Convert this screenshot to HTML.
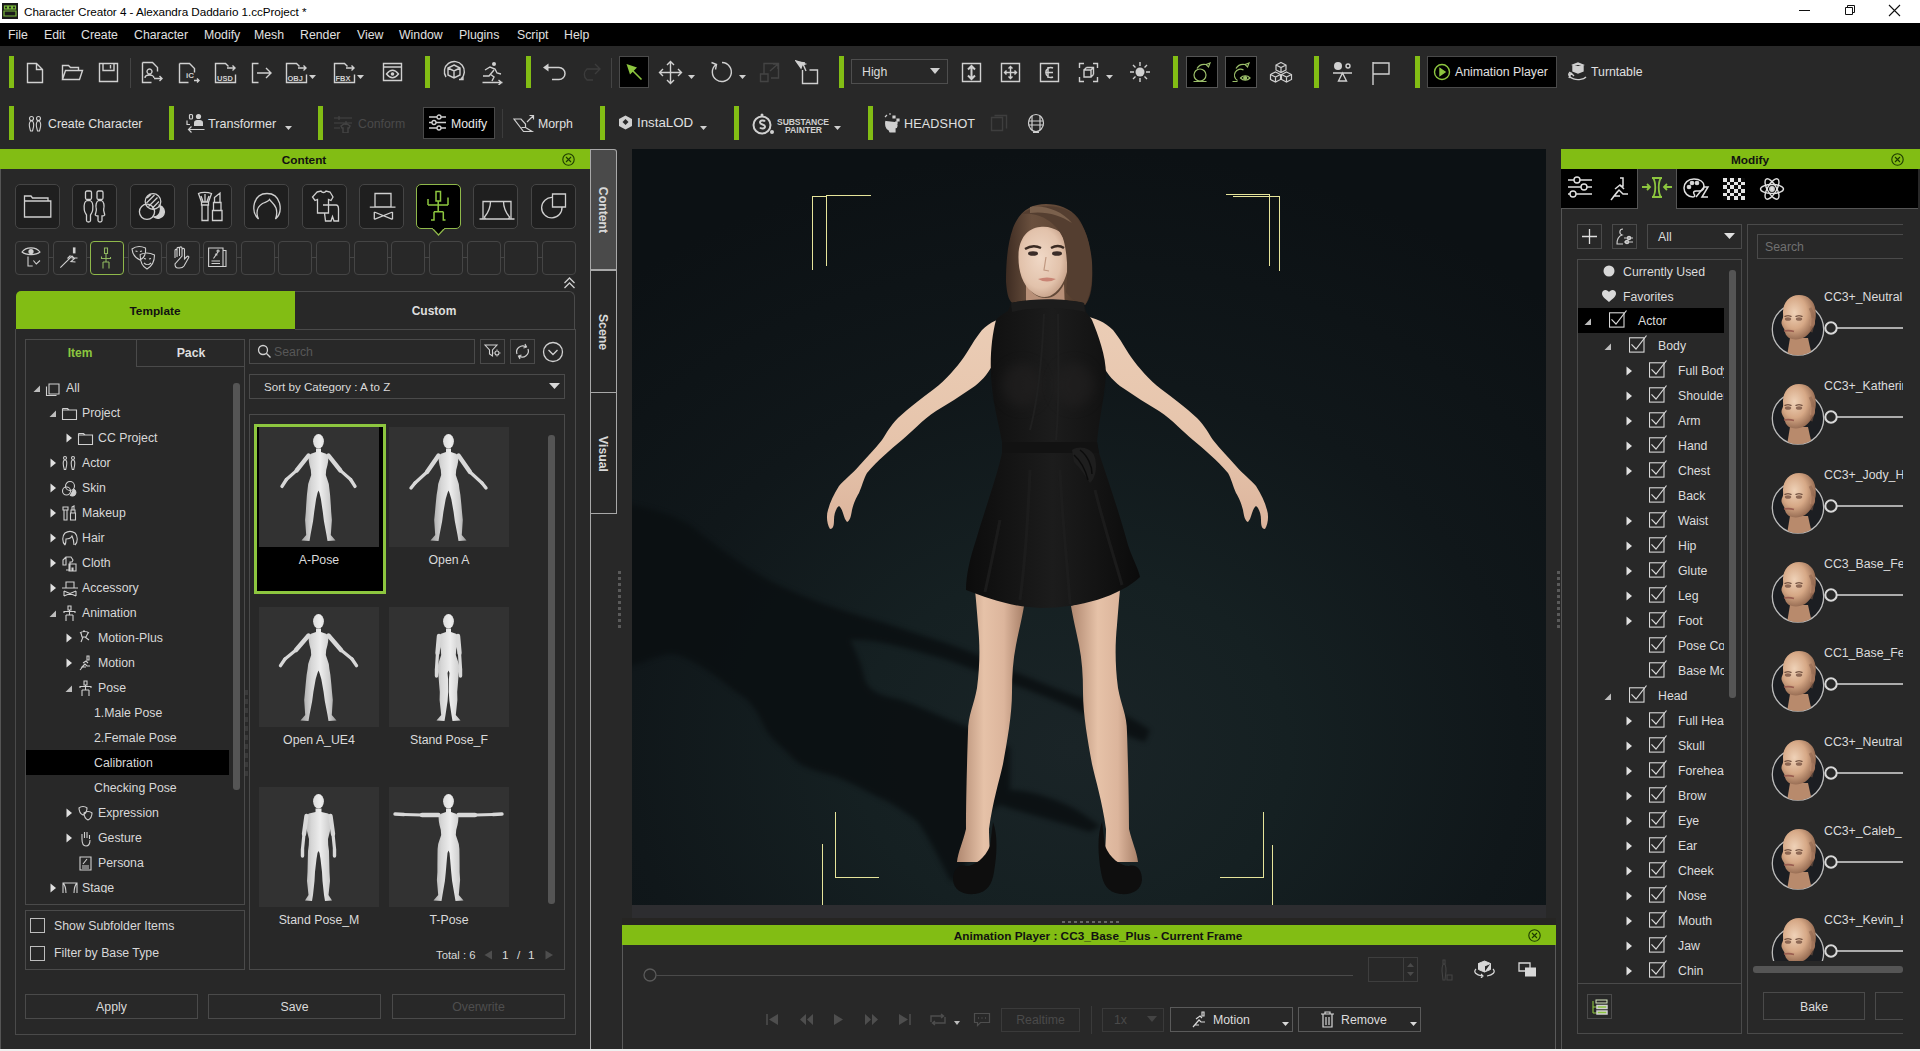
<!DOCTYPE html><html><head><meta charset="utf-8"><style>
*{margin:0;padding:0;box-sizing:border-box}
html,body{width:1920px;height:1051px;overflow:hidden}
body{background:#282828;font-family:"Liberation Sans",sans-serif;font-size:12px;color:#d4d4d4;position:relative}
.a{position:absolute}
.t{position:absolute;white-space:nowrap}
</style></head><body>

<div class="a" style="left:0px;top:0px;width:1920px;height:23px;background:#fff"></div>
<svg class="a" style="left:2px;top:3px;" width="16" height="16" viewBox="0 0 16 16" fill="none" stroke="#d0d0d0" stroke-width="1.5"><rect x="0" y="0" width="16" height="16" fill="#1a1a1a" stroke="none"/><g stroke="#7ab93a" stroke-width="1.2"><rect x="2.5" y="3" width="3" height="3"/><rect x="6.5" y="3" width="3" height="3"/><rect x="10.5" y="3" width="3" height="3"/><path d="M2 8h12v5H2z"/></g></svg>
<div class="t" style="left:24px;top:4.5px;font-size:11.7px;line-height:14px;color:#000;letter-spacing:-0.05px">Character Creator 4 - Alexandra Daddario 1.ccProject *</div>
<div class="a" style="left:1799px;top:10px;width:11px;height:1px;background:#111"></div>
<svg class="a" style="left:1843px;top:4px;" width="12" height="12" viewBox="0 0 12 12" fill="none" stroke="#d0d0d0" stroke-width="1.5"><path d="M2.5 3.5h7v7h-7z M4.5 3.5v-2h7v7h-2" stroke="#111" stroke-width="1"/></svg>
<svg class="a" style="left:1888px;top:4px;" width="13" height="13" viewBox="0 0 13 13" fill="none" stroke="#d0d0d0" stroke-width="1.5"><path d="M1 1L12 12M12 1L1 12" stroke="#111" stroke-width="1.1"/></svg>
<div class="a" style="left:0px;top:23px;width:1920px;height:23px;background:#000"></div>
<div class="t" style="left:8px;top:27.5px;font-size:12.3px;line-height:14px;color:#e0e0e0">File</div>
<div class="t" style="left:44px;top:27.5px;font-size:12.3px;line-height:14px;color:#e0e0e0">Edit</div>
<div class="t" style="left:81px;top:27.5px;font-size:12.3px;line-height:14px;color:#e0e0e0">Create</div>
<div class="t" style="left:134px;top:27.5px;font-size:12.3px;line-height:14px;color:#e0e0e0">Character</div>
<div class="t" style="left:204px;top:27.5px;font-size:12.3px;line-height:14px;color:#e0e0e0">Modify</div>
<div class="t" style="left:254px;top:27.5px;font-size:12.3px;line-height:14px;color:#e0e0e0">Mesh</div>
<div class="t" style="left:300px;top:27.5px;font-size:12.3px;line-height:14px;color:#e0e0e0">Render</div>
<div class="t" style="left:357px;top:27.5px;font-size:12.3px;line-height:14px;color:#e0e0e0">View</div>
<div class="t" style="left:399px;top:27.5px;font-size:12.3px;line-height:14px;color:#e0e0e0">Window</div>
<div class="t" style="left:459px;top:27.5px;font-size:12.3px;line-height:14px;color:#e0e0e0">Plugins</div>
<div class="t" style="left:517px;top:27.5px;font-size:12.3px;line-height:14px;color:#e0e0e0">Script</div>
<div class="t" style="left:564px;top:27.5px;font-size:12.3px;line-height:14px;color:#e0e0e0">Help</div>
<div class="a" style="left:0px;top:46px;width:1920px;height:103px;background:#282828"></div>
<div class="a" style="left:9px;top:56px;width:5px;height:32px;background:#82bd14"></div>
<svg class="a" style="left:26px;top:62px;stroke:#d0d0d0;stroke-width:1.4px" width="18" height="22" viewBox="0 0 18 22" fill="none" stroke="#d0d0d0" stroke-width="1.5"><path d="M1.5 1.5h9l6 6v13h-15z M10.5 1.5v6h6"/></svg>
<svg class="a" style="left:61px;top:64px;stroke:#d0d0d0;stroke-width:1.4px" width="23" height="17" viewBox="0 0 23 17" fill="none" stroke="#d0d0d0" stroke-width="1.5"><path d="M1.5 15.5v-14h6l2 2h8v3 M1.5 15.5l3-9h17l-3 9z"/></svg>
<svg class="a" style="left:98px;top:62px;stroke:#d0d0d0;stroke-width:1.4px" width="21" height="21" viewBox="0 0 21 21" fill="none" stroke="#d0d0d0" stroke-width="1.5"><path d="M1.5 1.5h18v18h-18z M5 1.5v7h11v-7 M12.5 3v3.5"/></svg>
<div class="a" style="left:130px;top:58px;width:1px;height:30px;background:#444"></div>
<svg class="a" style="left:141px;top:61px;stroke:#d0d0d0;stroke-width:1.4px" width="23" height="23" viewBox="0 0 23 23" fill="none" stroke="#d0d0d0" stroke-width="1.5"><path d="M1.5 1.5h10l5 5v4 M1.5 1.5v20h9 M8.5 8a2.5 2.5 0 1 0 0.01 0 M4 17c0-4 9-4 9 0 M13 17.5h8 M18.5 15l2.5 2.5-2.5 2.5"/></svg>
<svg class="a" style="left:178px;top:62px;stroke:#d0d0d0;stroke-width:1.4px" width="23" height="22" viewBox="0 0 23 22" fill="none" stroke="#d0d0d0" stroke-width="1.5"><path d="M1.5 1.5h10l5 5v4 M1.5 1.5v19h9"/><text x="8" y="16" font-size="8" font-weight="bold" fill="#d0d0d0" stroke="none" font-family="Liberation Sans">iC</text><path d="M16 18.5h5 M19 16.5l2 2-2 2"/></svg>
<svg class="a" style="left:214px;top:62px;stroke:#d0d0d0;stroke-width:1.4px" width="24" height="22" viewBox="0 0 24 22" fill="none" stroke="#d0d0d0" stroke-width="1.5"><path d="M1.5 8v12.5h20v-8 M1.5 8v-6.5h10l3 3"/><text x="3" y="19" font-size="7.5" font-weight="bold" fill="#d0d0d0" stroke="none" font-family="Liberation Sans">USD</text><path d="M13 6h8 M18.5 3.5l2.5 2.5-2.5 2.5"/></svg>
<svg class="a" style="left:251px;top:62px;stroke:#d0d0d0;stroke-width:1.4px" width="22" height="22" viewBox="0 0 22 22" fill="none" stroke="#d0d0d0" stroke-width="1.5"><path d="M7.5 1.5h-6v19h6 M6 11h14 M15 6l5 5-5 5"/></svg>
<svg class="a" style="left:285px;top:62px;stroke:#d0d0d0;stroke-width:1.4px" width="24" height="22" viewBox="0 0 24 22" fill="none" stroke="#d0d0d0" stroke-width="1.5"><path d="M1.5 8v12.5h20v-8 M1.5 8v-6.5h10l3 3"/><text x="2.5" y="19" font-size="7.5" font-weight="bold" fill="#d0d0d0" stroke="none" font-family="Liberation Sans">OBJ</text><path d="M13 6h8 M18.5 3.5l2.5 2.5-2.5 2.5"/></svg>
<svg class="a" style="left:309px;top:75px;stroke:#d0d0d0;stroke-width:1.4px" width="8" height="5" viewBox="0 0 8 5" fill="none" stroke="#d0d0d0" stroke-width="1.5"><path d="M0 0h7l-3.5 4z" fill="#d0d0d0" stroke="none"/></svg>
<svg class="a" style="left:333px;top:62px;stroke:#d0d0d0;stroke-width:1.4px" width="24" height="22" viewBox="0 0 24 22" fill="none" stroke="#d0d0d0" stroke-width="1.5"><path d="M1.5 8v12.5h20v-8 M1.5 8v-6.5h10l3 3"/><text x="2.5" y="19" font-size="7.5" font-weight="bold" fill="#d0d0d0" stroke="none" font-family="Liberation Sans">FBX</text><path d="M13 6h8 M18.5 3.5l2.5 2.5-2.5 2.5"/></svg>
<svg class="a" style="left:357px;top:75px;stroke:#d0d0d0;stroke-width:1.4px" width="8" height="5" viewBox="0 0 8 5" fill="none" stroke="#d0d0d0" stroke-width="1.5"><path d="M0 0h7l-3.5 4z" fill="#d0d0d0" stroke="none"/></svg>
<svg class="a" style="left:382px;top:62px;stroke:#d0d0d0;stroke-width:1.4px" width="21" height="20" viewBox="0 0 21 20" fill="none" stroke="#d0d0d0" stroke-width="1.5"><path d="M1.5 1.5h18v17h-18z M1.5 5h18 M4.5 12c4-5 8-5 12 0c-4 5-8 5-12 0z"/><circle cx="10.5" cy="12" r="1.8" fill="#d0d0d0" stroke="none"/></svg>
<div class="a" style="left:425px;top:56px;width:5px;height:32px;background:#82bd14"></div>
<svg class="a" style="left:442px;top:60px;stroke:#d0d0d0;stroke-width:1.4px" width="24" height="24" viewBox="0 0 24 24" fill="none" stroke="#d0d0d0" stroke-width="1.5"><path d="M12 5l6 3v7l-6 3-6-3v-7z M6 8l6 3 6-3 M12 11v7" /><path d="M4 17a10 10 0 1 1 15 2 M17 19.5h4v-3"/></svg>
<svg class="a" style="left:481px;top:61px;stroke:#d0d0d0;stroke-width:1.4px" width="23" height="24" viewBox="0 0 23 24" fill="none" stroke="#d0d0d0" stroke-width="1.5"><circle cx="13" cy="3" r="2" fill="#d0d0d0" stroke="none"/><path d="M4 9l5-3 5 2 2 4 4 1 M9 13l4 3-2 4 M13 9l-5 6h-6 M1.5 21.5h20 M17.5 19l3 2.5-3 2.5"/></svg>
<div class="a" style="left:526px;top:56px;width:5px;height:32px;background:#82bd14"></div>
<svg class="a" style="left:542px;top:62px;stroke:#d0d0d0;stroke-width:1.4px" width="26" height="20" viewBox="0 0 26 20" fill="none" stroke="#d0d0d0" stroke-width="1.5"><path d="M3 5.5H17A6 6 0 0 1 17 17.5H10" stroke-width="1.5"/><path d="M1 5.5L6.5 1.5V9.5Z" fill="#d0d0d0" stroke="none"/></svg>
<svg class="a" style="left:578px;top:62px;stroke:#3c3c3c;stroke-width:1.4px" width="24" height="19" viewBox="0 0 24 19" fill="none" stroke="#d0d0d0" stroke-width="1.5"><path d="M22 7h-13a7 7 0 0 0 0 11h6 M17 2l5 5-5 5"/></svg>
<div class="a" style="left:611px;top:58px;width:1px;height:30px;background:#444"></div>
<div class="a" style="left:619px;top:56px;width:30px;height:32px;background:#000;border:1px solid #4a4a4a"></div>
<svg class="a" style="left:624px;top:61px;stroke:#8dc63f;stroke-width:1.4px" width="20" height="20" viewBox="0 0 20 20" fill="none" stroke="#d0d0d0" stroke-width="1.5"><path d="M2.5 3L13 6.5L6 13.5Z" fill="#8dc63f" stroke="none"/><path d="M8 9L17.5 18.5" stroke-width="1.6"/></svg>
<svg class="a" style="left:658px;top:60px;stroke:#d0d0d0;stroke-width:1.4px" width="25" height="25" viewBox="0 0 25 25" fill="none" stroke="#d0d0d0" stroke-width="1.5"><path d="M12.5 1.5v22 M1.5 12.5h22 M9 5l3.5-3.5L16 5 M9 20l3.5 3.5L16 20 M5 9l-3.5 3.5L5 16 M20 9l3.5 3.5L20 16"/></svg>
<svg class="a" style="left:688px;top:75px;stroke:#d0d0d0;stroke-width:1.4px" width="8" height="5" viewBox="0 0 8 5" fill="none" stroke="#d0d0d0" stroke-width="1.5"><path d="M0 0h7l-3.5 4z" fill="#d0d0d0" stroke="none"/></svg>
<svg class="a" style="left:709px;top:60px;stroke:#d0d0d0;stroke-width:1.4px" width="25" height="25" viewBox="0 0 25 25" fill="none" stroke="#d0d0d0" stroke-width="1.5"><path d="M7 4.5a9.5 9.5 0 1 0 6-2 M2.5 2.5l5 2-1 5"/></svg>
<svg class="a" style="left:739px;top:75px;stroke:#d0d0d0;stroke-width:1.4px" width="8" height="5" viewBox="0 0 8 5" fill="none" stroke="#d0d0d0" stroke-width="1.5"><path d="M0 0h7l-3.5 4z" fill="#d0d0d0" stroke="none"/></svg>
<svg class="a" style="left:759px;top:62px;stroke:#444;stroke-width:1.4px" width="21" height="21" viewBox="0 0 21 21" fill="none" stroke="#d0d0d0" stroke-width="1.5"><path d="M1.5 12v7.5h7.5v-7.5z M5 12v-10.5h14.5v14.5h-7.5 M11 9l8-7 M14 2h5v5"/></svg>
<svg class="a" style="left:795px;top:60px;stroke:#d0d0d0;stroke-width:1.4px" width="24" height="25" viewBox="0 0 24 25" fill="none" stroke="#d0d0d0" stroke-width="1.5"><path d="M7.5 10v13.5h15v-13.5h-8 M2 2l6 2 3 7 M2 2l8 1"/><path d="M1 1l9 3-3 1-1 3z" fill="#d0d0d0"/></svg>
<div class="a" style="left:839px;top:56px;width:5px;height:32px;background:#82bd14"></div>
<div class="a" style="left:851px;top:59px;width:97px;height:25px;border:1px solid #4e4e4e;background:#282828"></div>
<div class="t" style="left:862px;top:64.5px;font-size:12.3px;line-height:14px;color:#dcdcdc">High</div>
<svg class="a" style="left:930px;top:68px;stroke:#d0d0d0;stroke-width:1.4px" width="11" height="7" viewBox="0 0 11 7" fill="none" stroke="#d0d0d0" stroke-width="1.5"><path d="M0 0h10l-5 6z" fill="#d0d0d0" stroke="none"/></svg>
<svg class="a" style="left:961px;top:62px;stroke:#d0d0d0;stroke-width:1.4px" width="21" height="21" viewBox="0 0 21 21" fill="none" stroke="#d0d0d0" stroke-width="1.5"><path d="M1.5 1.5h18v18h-18z"/><path d="M10.5 4v13 M7 7.5l3.5-3.5 3.5 3.5 M7 13.5l3.5 3.5 3.5-3.5" stroke-width="2"/></svg>
<svg class="a" style="left:1000px;top:62px;stroke:#d0d0d0;stroke-width:1.4px" width="21" height="21" viewBox="0 0 21 21" fill="none" stroke="#d0d0d0" stroke-width="1.5"><path d="M1.5 1.5h18v18h-18z M10.5 4.5v12 M4.5 10.5h12 M8.5 6.5l2-2 2 2 M8.5 14.5l2 2 2-2 M6.5 8.5l-2 2 2 2 M14.5 8.5l2 2-2 2"/></svg>
<svg class="a" style="left:1039px;top:62px;stroke:#d0d0d0;stroke-width:1.4px" width="21" height="21" viewBox="0 0 21 21" fill="none" stroke="#d0d0d0" stroke-width="1.5"><path d="M1.5 1.5h18v18h-18z M14 6a5 5 0 1 0 0 9 M7 10.5h7 M9 5v11"/></svg>
<svg class="a" style="left:1078px;top:62px;stroke:#d0d0d0;stroke-width:1.4px" width="21" height="21" viewBox="0 0 21 21" fill="none" stroke="#d0d0d0" stroke-width="1.5"><path d="M1.5 6v-4.5h4.5 M15 1.5h4.5v4.5 M19.5 15v4.5h-4.5 M6 19.5h-4.5v-4.5 M6 8h7v7h-7z M8.5 5.5h7v7 M6 8l2.5-2.5 M13 8l2.5-2.5 M13 15l2.5-2.5"/></svg>
<svg class="a" style="left:1106px;top:75px;stroke:#d0d0d0;stroke-width:1.4px" width="8" height="5" viewBox="0 0 8 5" fill="none" stroke="#d0d0d0" stroke-width="1.5"><path d="M0 0h7l-3.5 4z" fill="#d0d0d0" stroke="none"/></svg>
<svg class="a" style="left:1129px;top:61px;stroke:#d0d0d0;stroke-width:1.4px" width="22" height="22" viewBox="0 0 22 22" fill="none" stroke="#d0d0d0" stroke-width="1.5"><circle cx="11" cy="11" r="4.5" fill="#d0d0d0" stroke="none"/><path d="M11 1v4 M11 17v4 M1 11h4 M17 11h4 M4 4l2.5 2.5 M15.5 15.5L18 18 M4 18l2.5-2.5 M15.5 6.5L18 4"/></svg>
<div class="a" style="left:1173px;top:56px;width:5px;height:32px;background:#82bd14"></div>
<div class="a" style="left:1186px;top:56px;width:32px;height:32px;background:#000;border:1px solid #555"></div>
<svg class="a" style="left:1190px;top:60px;stroke:#9cbf6a;stroke-width:1.2px" width="24" height="24" viewBox="0 0 24 24" fill="none" stroke="#d0d0d0" stroke-width="1.5"><circle cx="10" cy="15" r="6"/><path d="M7 8.5C9 5 13 4 16 4.5 M16 4.5l4-1.5-1.5 4z M3.5 21.5h13"/></svg>
<div class="a" style="left:1225px;top:56px;width:32px;height:32px;background:#000;border:1px solid #555"></div>
<svg class="a" style="left:1229px;top:60px;stroke:#9cbf6a;stroke-width:1.2px" width="24" height="24" viewBox="0 0 24 24" fill="none" stroke="#d0d0d0" stroke-width="1.5"><path d="M14.5 10a6 6 0 1 0-6 10.5 M7 8.5C9 5 13 4 16 4.5 M16 4.5l4-1.5-1.5 4z M3.5 21.5h5"/><path d="M11.5 18c2.5-3 7-3 9.5 0c-2.5 3-7 3-9.5 0z"/><circle cx="16.2" cy="18" r="1.5" fill="#9cbf6a"/></svg>
<svg class="a" style="left:1269px;top:61px;stroke:#d0d0d0;stroke-width:1.2px" width="24" height="23" viewBox="0 0 24 23" fill="none" stroke="#d0d0d0" stroke-width="1.5"><path d="M12 1.5l5 2.5v5l-5 2.5-5-2.5v-5z M7 4l5 2.5 5-2.5 M12 6.5v5 M6.5 11l5 2.5v5l-5 2.5-5-2.5v-5z M1.5 13.5l5 2.5 5-2.5 M6.5 16v5 M17.5 11l5 2.5v5l-5 2.5-5-2.5v-5z M12.5 13.5l5 2.5 5-2.5 M17.5 16v5"/></svg>
<div class="a" style="left:1314px;top:56px;width:5px;height:32px;background:#82bd14"></div>
<svg class="a" style="left:1332px;top:61px;stroke:#d0d0d0;stroke-width:1.4px" width="21" height="22" viewBox="0 0 21 22" fill="none" stroke="#d0d0d0" stroke-width="1.5"><circle cx="6" cy="5" r="4" fill="#d0d0d0" stroke="none"/><circle cx="16" cy="5" r="2"/><path d="M1 12h19 M10.5 12l-4 8h8z"/></svg>
<svg class="a" style="left:1371px;top:61px;stroke:#d0d0d0;stroke-width:1.4px" width="20" height="24" viewBox="0 0 20 24" fill="none" stroke="#d0d0d0" stroke-width="1.5"><path d="M2 1v23 M2 2h16v11h-16"/></svg>
<div class="a" style="left:1415px;top:56px;width:5px;height:32px;background:#82bd14"></div>
<div class="a" style="left:1427px;top:56px;width:130px;height:32px;background:#000;border:1px solid #4a4a4a"></div>
<svg class="a" style="left:1433px;top:63px;stroke:#8dc63f;stroke-width:1.4px" width="18" height="18" viewBox="0 0 18 18" fill="none" stroke="#d0d0d0" stroke-width="1.5"><circle cx="9" cy="9" r="7.5"/><path d="M7 5.5l5 3.5-5 3.5z" fill="#8dc63f"/></svg>
<div class="t" style="left:1455px;top:65.0px;font-size:12.3px;line-height:14px;color:#e0e0e0">Animation Player</div>
<svg class="a" style="left:1567px;top:62px;stroke:#d0d0d0;stroke-width:1.4px" width="22" height="20" viewBox="0 0 22 20" fill="none" stroke="#d0d0d0" stroke-width="1.5"><path d="M6 3l5-2 5 2-5 2z M6 3v6l5 2 5-2v-6 M11 5v6" fill="#d0d0d0"/><path d="M3 10a9 5 0 0 0 16 5 M2 16l2-5 3 3"/></svg>
<div class="t" style="left:1591px;top:65.0px;font-size:12.3px;line-height:14px;color:#e0e0e0">Turntable</div>
<div class="a" style="left:9px;top:106px;width:5px;height:34px;background:#82bd14"></div>
<svg class="a" style="left:28px;top:115px;stroke:#d0d0d0;stroke-width:1.1px" width="14" height="17" viewBox="0 0 14 17" fill="none" stroke="#d0d0d0" stroke-width="1.5"><path d="M3.5 1.5a1.5 1.5 0 0 1 0 4a1.5 1.5 0 0 1 0-4 M3.5 6c-2 0-2.5 3-2 6l1 4h2l1-4c.5-3 0-6-2-6 M10.5 1.5a1.5 1.5 0 0 1 0 4a1.5 1.5 0 0 1 0-4 M10.5 6c-2 0-2.5 3-2 6l1 4h2l1-4c.5-3 0-6-2-6"/></svg>
<div class="t" style="left:48px;top:116.5px;font-size:12.3px;line-height:14px;color:#e0e0e0">Create Character</div>
<div class="a" style="left:169px;top:106px;width:5px;height:34px;background:#82bd14"></div>
<svg class="a" style="left:186px;top:113px;stroke:#d0d0d0;stroke-width:1.2px" width="20" height="20" viewBox="0 0 20 20" fill="none" stroke="#d0d0d0" stroke-width="1.5"><rect x="3.5" y="1.5" width="3" height="4.5" rx="1"/><path d="M1 7.5V11.5H4"/><circle cx="12.5" cy="3.5" r="2.6" fill="#d0d0d0" stroke="none"/><path d="M8 13V9.5C8 7.5 10 7 12.5 7S17 7.5 17 9.5V13Z" fill="#d0d0d0" stroke="none"/><path d="M18.5 16.5H2.5M5.5 13.5L2.5 16.5L5.5 19.5"/></svg>
<div class="t" style="left:208px;top:116.5px;font-size:12.6px;line-height:14px;color:#e0e0e0">Transformer</div>
<svg class="a" style="left:285px;top:126px;stroke:#d0d0d0;stroke-width:1.4px" width="8" height="5" viewBox="0 0 8 5" fill="none" stroke="#d0d0d0" stroke-width="1.5"><path d="M0 0h7l-3.5 4z" fill="#d0d0d0" stroke="none"/></svg>
<div class="a" style="left:318px;top:106px;width:5px;height:34px;background:#82bd14"></div>
<svg class="a" style="left:333px;top:114px;stroke:#444;stroke-width:1.4px" width="21" height="19" viewBox="0 0 21 19" fill="none" stroke="#d0d0d0" stroke-width="1.5"><path d="M1 4h18 M1 9h18 M1 14h6 M6 2v4 M13 7v4" stroke-width="1.2"/><path d="M8 12l3-2h3l3 2-1 2h-1v5h-5v-5h-1z"/></svg>
<div class="t" style="left:358px;top:116.5px;font-size:12.3px;line-height:14px;color:#4a4a4a">Conform</div>
<div class="a" style="left:423px;top:107px;width:72px;height:32px;background:#000;border:1px solid #4a4a4a"></div>
<svg class="a" style="left:428px;top:114px;stroke:#d0d0d0;stroke-width:1.3px" width="19" height="17" viewBox="0 0 19 17" fill="none" stroke="#d0d0d0" stroke-width="1.5"><path d="M1 3h17 M1 8.5h17 M1 14h17"/><circle cx="11" cy="3" r="2" fill="#000"/><circle cx="6" cy="8.5" r="2" fill="#000"/><circle cx="11" cy="14" r="2" fill="#000"/></svg>
<div class="t" style="left:451px;top:116.5px;font-size:12.3px;line-height:14px;color:#e8e8e8">Modify</div>
<div class="a" style="left:502px;top:109px;width:1px;height:29px;background:#3c3c3c"></div>
<svg class="a" style="left:513px;top:114px;stroke:#d0d0d0;stroke-width:1.2px" width="23" height="19" viewBox="0 0 23 19" fill="none" stroke="#d0d0d0" stroke-width="1.5"><path d="M1 5H8L12.5 10V13.5L19 17.5H10.5Z M12.5 13.5H8.5 M14 8L20.5 1.5 M16.5 1.5H20.5V5.5"/></svg>
<div class="t" style="left:538px;top:116.5px;font-size:12.3px;line-height:14px;color:#e0e0e0">Morph</div>
<div class="a" style="left:600px;top:106px;width:5px;height:34px;background:#82bd14"></div>
<svg class="a" style="left:618px;top:115px;stroke:#d0d0d0;stroke-width:1.4px" width="15" height="15" viewBox="0 0 15 15" fill="none" stroke="#d0d0d0" stroke-width="1.5"><path d="M7.5 0.5l6.5 3.5v7l-6.5 3.5-6.5-3.5v-7z" fill="#d0d0d0" stroke="none"/><path d="M7.5 4l3 3-3 3-3-3z" fill="#282828" stroke="none"/></svg>
<div class="t" style="left:637px;top:116.0px;font-size:13.3px;line-height:14px;color:#e0e0e0">InstaLOD</div>
<svg class="a" style="left:700px;top:126px;stroke:#d0d0d0;stroke-width:1.4px" width="8" height="5" viewBox="0 0 8 5" fill="none" stroke="#d0d0d0" stroke-width="1.5"><path d="M0 0h7l-3.5 4z" fill="#d0d0d0" stroke="none"/></svg>
<div class="a" style="left:734px;top:106px;width:5px;height:34px;background:#82bd14"></div>
<svg class="a" style="left:752px;top:113px;stroke:#d0d0d0;stroke-width:1.4px" width="24" height="22" viewBox="0 0 24 22" fill="none" stroke="#d0d0d0" stroke-width="1.5"><circle cx="10" cy="12" r="8.5" stroke-width="2"/><path d="M13 8.5c-1-1.5-5-1.5-5 1s5 1.5 5 4-4 2.5-5 1" stroke-width="2"/><circle cx="20" cy="19" r="2" fill="#d0d0d0" stroke="none"/><circle cx="10" cy="2" r="1.5" fill="#d0d0d0" stroke="none"/></svg>
<div class="t" style="left:777px;top:116.5px;font-size:8.6px;line-height:10px;color:#d0d0d0;font-weight:bold;letter-spacing:-0.1px">SUBSTANCE</div>
<div class="t" style="left:785px;top:125.0px;font-size:8.6px;line-height:10px;color:#d0d0d0;font-weight:bold">PAINTER</div>
<svg class="a" style="left:834px;top:126px;stroke:#d0d0d0;stroke-width:1.4px" width="8" height="5" viewBox="0 0 8 5" fill="none" stroke="#d0d0d0" stroke-width="1.5"><path d="M0 0h7l-3.5 4z" fill="#d0d0d0" stroke="none"/></svg>
<div class="a" style="left:868px;top:106px;width:5px;height:34px;background:#82bd14"></div>
<svg class="a" style="left:883px;top:113px;stroke:#d0d0d0;stroke-width:1.4px" width="18" height="20" viewBox="0 0 18 20" fill="none" stroke="#d0d0d0" stroke-width="1.5"><path d="M3 8c-1 3 0 8 3 9l1 2h5v-4c2 0 2-2 2-3l-2-3 M2 4l2-2 M6 1h2 M10 3h2v2h-2z M14 6h2v2h-2z M12 9h2v2" fill="#d0d0d0" stroke-width="1.2"/></svg>
<div class="t" style="left:904px;top:117.0px;font-size:12.6px;line-height:14px;color:#e0e0e0;letter-spacing:0.15px">HEADSHOT</div>
<svg class="a" style="left:990px;top:114px;stroke:#3e3e3e;stroke-width:1.4px" width="18" height="18" viewBox="0 0 18 18" fill="none" stroke="#d0d0d0" stroke-width="1.5"><path d="M1.5 3.5h11v13h-11z M4.5 1.5h12v13" /></svg>
<svg class="a" style="left:1027px;top:113px;stroke:#d0d0d0;stroke-width:1.2px" width="18" height="21" viewBox="0 0 18 21" fill="none" stroke="#d0d0d0" stroke-width="1.5"><ellipse cx="9" cy="10" rx="7.5" ry="8.5"/><path d="M1.5 8h15 M1.5 12h15 M5 2.5v15 M13 2.5v15 M6 19.5h6"/></svg>
<div class="a" style="left:0px;top:149px;width:591px;height:900px;background:#282828"></div>
<div class="a" style="left:0px;top:169px;width:1px;height:880px;background:#555"></div>
<div class="a" style="left:0px;top:149px;width:591px;height:20px;background:#82bd14"></div>
<div class="t" style="left:104.0px;top:152.5px;width:400px;text-align:center;font-size:11.8px;line-height:14px;color:#111;font-weight:bold">Content</div>
<svg class="a" style="left:562px;top:153px;" width="13" height="13" viewBox="0 0 13 13" fill="none" stroke="#d0d0d0" stroke-width="1.5"><circle cx="6.5" cy="6.5" r="5.7" stroke="#1c3a00" stroke-width="1.1"/><path d="M4 4l5 5M9 4l-5 5" stroke="#1c3a00" stroke-width="1.1"/></svg>
<div class="a" style="left:15px;top:184px;width:45px;height:45px;background:#1f1f1f;border:1px solid #454545;border-radius:5px"></div>
<svg class="a" style="left:15px;top:184px;stroke-width:1.3px" width="45" height="45" viewBox="0 0 45 45" fill="none" stroke="#d0d0d0" stroke-width="1.5"><path d="M9.5 33 V12 H16 L17.5 14 H33 V17 M9.5 17 H35.8 V33 H9.5Z"/></svg>
<div class="a" style="left:72px;top:184px;width:45px;height:45px;background:#1f1f1f;border:1px solid #454545;border-radius:5px"></div>
<svg class="a" style="left:72px;top:184px;stroke-width:1.3px" width="45" height="45" viewBox="0 0 45 45" fill="none" stroke="#d0d0d0" stroke-width="1.5"><rect x="13.5" y="7" width="6" height="8.5" rx="1.5"/><path d="M15 16.5 C12 17.5 11.8 22 12.3 26 C12.8 29 14 30 14.5 31 L14.5 36.5 C14.5 38.5 18.5 38.5 18.5 36.5 L18.5 31 C19 30 20.2 29 20.7 26 C21.2 22 21 17.5 18 16.5Z"/><rect x="25" y="7" width="6" height="8.5" rx="1.5"/><path d="M26.5 16.5 C24 17.5 23.5 22 24.3 25 C24.8 27 23.3 29 23.3 31 C23.8 32 25 32 26 32 L26 36.5 C26 38.5 30 38.5 30 36.5 L30 32 C31 32 32.2 32 32.7 31 C32.7 29 31.2 27 31.7 25 C32.5 22 32 17.5 29.5 16.5Z"/></svg>
<div class="a" style="left:130px;top:184px;width:45px;height:45px;background:#1f1f1f;border:1px solid #454545;border-radius:5px"></div>
<svg class="a" style="left:130px;top:184px;stroke-width:1.3px" width="45" height="45" viewBox="0 0 45 45" fill="none" stroke="#d0d0d0" stroke-width="1.5"><circle cx="23" cy="17.5" r="7.8"/><path d="M17 14 L21 10.5 M16.5 19 L24.5 11 M18.5 22.5 L27.5 13.5 M22 24.5 L29 17.5"/><path d="M29.5 21.5 A6.5 6.5 0 1 1 24 33 A7.7 7.7 0 0 0 29.5 21.5Z" fill="#d0d0d0"/><circle cx="17" cy="27.8" r="7.6"/></svg>
<div class="a" style="left:187px;top:184px;width:45px;height:45px;background:#1f1f1f;border:1px solid #454545;border-radius:5px"></div>
<svg class="a" style="left:187px;top:184px;stroke-width:1.3px" width="45" height="45" viewBox="0 0 45 45" fill="none" stroke="#d0d0d0" stroke-width="1.5"><path d="M11.5 9.5 C14 8 21 8 24.5 9.5 L21.5 18 H14.5Z M14 12 L16 17.5 M18 10 V17.5 M22 12 L20 17.5 M14.5 18 H21.5 V21 H14.5Z M15 21 H21 V36.5 H15Z M27.5 13.5 L33 9 V18.5 H27.5Z M26.5 18.5 H34 V26.5 H26.5Z M25.5 26.5 H35 V36.5 H25.5Z"/></svg>
<div class="a" style="left:244px;top:184px;width:45px;height:45px;background:#1f1f1f;border:1px solid #454545;border-radius:5px"></div>
<svg class="a" style="left:244px;top:184px;stroke-width:1.3px" width="45" height="45" viewBox="0 0 45 45" fill="none" stroke="#d0d0d0" stroke-width="1.5"><path d="M14.5 35 C10 31 9 25 10.5 19 C12.5 12 18 9.5 23 9.5 C28 9.5 33.5 12 35.5 19 C37 25 36 31 31.5 35 C33 31 33 27 32 24 C30.5 20 27.5 18 25.5 15.5 C24 18 21 18 18.5 19.5 C15 21.5 13 25 13 29 C13 31.5 13.5 33 14.5 35Z"/></svg>
<div class="a" style="left:302px;top:184px;width:45px;height:45px;background:#1f1f1f;border:1px solid #454545;border-radius:5px"></div>
<svg class="a" style="left:302px;top:184px;stroke-width:1.3px" width="45" height="45" viewBox="0 0 45 45" fill="none" stroke="#d0d0d0" stroke-width="1.5"><path d="M15 8 L19 7 C20 9 23 9 24 7 L28 8 L31 13 L29 16.5 L26.5 15.5 V29 H15.5 V15.5 L13 16.5 L10.5 13Z M21 21 H34 C35.5 21 36.5 23 36.5 25 V37 H32 L30.5 32.5 L29 37 H23.5 L22.5 29"/></svg>
<div class="a" style="left:359px;top:184px;width:45px;height:45px;background:#1f1f1f;border:1px solid #454545;border-radius:5px"></div>
<svg class="a" style="left:359px;top:184px;stroke-width:1.3px" width="45" height="45" viewBox="0 0 45 45" fill="none" stroke="#d0d0d0" stroke-width="1.5"><path d="M16 9.5 H32 V23 H16Z M10.8 23.2 H36.5 M15.3 28 L33.5 35.3 M15.3 35.3 L33.5 28 M15.3 28 V35.3 M33.5 28 V35.3"/></svg>
<div class="a" style="left:416px;top:184px;width:45px;height:45px;background:#000;border:1px solid #8fb84a;border-radius:5px"></div>
<svg class="a" style="left:432px;top:228px;" width="13" height="8" viewBox="0 0 13 8" fill="none" stroke="#d0d0d0" stroke-width="1.5"><path d="M0.5 0.5L6.5 7L12.5 0.5" fill="#000" stroke="#8fb84a" stroke-width="1.2"/></svg>
<div class="a" style="left:433px;top:227px;width:11px;height:2px;background:#000"></div>
<svg class="a" style="left:416px;top:184px;stroke-width:1.5px" width="45" height="45" viewBox="0 0 45 45" fill="none" stroke="#d0d0d0" stroke-width="1.5"><g stroke="#8dc63f"><path d="M20 7.5 H24.5 V17 H20Z M22.2 17 V27.7 M12 21 H32 M12 21 V15 M32 21 V13.5 M18 27.7 H27.3 M18 27.7 V36 H15 M27.3 27.7 V36 H29.5"/></g></svg>
<div class="a" style="left:473px;top:184px;width:45px;height:45px;background:#1f1f1f;border:1px solid #454545;border-radius:5px"></div>
<svg class="a" style="left:473px;top:184px;stroke-width:1.3px" width="45" height="45" viewBox="0 0 45 45" fill="none" stroke="#d0d0d0" stroke-width="1.5"><path d="M6.5 35 H41.5 M10 35 V17.5 H38 V35 M17.5 17.5 C17.5 24 14 30 11.5 33 L12.5 35 M30.5 17.5 C30.5 24 34 30 36.5 33 L35.5 35"/></svg>
<div class="a" style="left:531px;top:184px;width:45px;height:45px;background:#1f1f1f;border:1px solid #454545;border-radius:5px"></div>
<svg class="a" style="left:531px;top:184px;stroke-width:1.3px" width="45" height="45" viewBox="0 0 45 45" fill="none" stroke="#d0d0d0" stroke-width="1.5"><path d="M21.5 10 H34.5 V23 H21.5Z M21.5 13.5 A10.2 10.2 0 1 0 31 23 H21.5Z"/></svg>
<div class="a" style="left:48px;top:257px;width:5px;height:1px;background:#454545"></div>
<div class="a" style="left:15px;top:241px;width:34px;height:34px;border:1px solid #454545;border-radius:4px"></div>
<svg class="a" style="left:15px;top:241px;stroke-width:1.1px" width="34" height="34" viewBox="0 0 34 34" fill="none" stroke="#d0d0d0" stroke-width="1.5"><path d="M7 11 C11 5.5 21 5.5 25 11 C21 14.5 11 14.5 7 11Z M13 15.5 V25 H17.7 M18.4 19.5 L21.3 23 L25 19.5"/><circle cx="16" cy="10.6" r="2.6" fill="#d0d0d0" stroke="none"/></svg>
<div class="a" style="left:86px;top:257px;width:5px;height:1px;background:#454545"></div>
<div class="a" style="left:53px;top:241px;width:34px;height:34px;border:1px solid #454545;border-radius:4px"></div>
<svg class="a" style="left:53px;top:241px;stroke-width:1.1px" width="34" height="34" viewBox="0 0 34 34" fill="none" stroke="#d0d0d0" stroke-width="1.5"><rect x="19.9" y="6.4" width="2.6" height="6" fill="#d0d0d0" stroke="none"/><path d="M7.3 26.7 L19 15 L21.5 17.5 L18 20.5 L22.5 21 M14.5 17.5 L17.5 14.5 M18.5 17 H24.5"/></svg>
<div class="a" style="left:123px;top:257px;width:5px;height:1px;background:#454545"></div>
<div class="a" style="left:90px;top:241px;width:34px;height:34px;border:1px solid #8fb84a;border-radius:4px"></div>
<svg class="a" style="left:90px;top:241px;stroke-width:1.1px" width="34" height="34" viewBox="0 0 34 34" fill="none" stroke="#d0d0d0" stroke-width="1.5"><g stroke="#8fb860"><path d="M14.5 7 H17.5 V12.5 H14.5Z M16 12.5 V21 M11.5 15.5 V17.5 H20.5 V16 M13 21 H19 M13 21 V27.5 M19 21 V27.5"/></g></svg>
<div class="a" style="left:161px;top:257px;width:5px;height:1px;background:#454545"></div>
<div class="a" style="left:128px;top:241px;width:34px;height:34px;border:1px solid #454545;border-radius:4px"></div>
<svg class="a" style="left:128px;top:241px;stroke-width:1.1px" width="34" height="34" viewBox="0 0 34 34" fill="none" stroke="#d0d0d0" stroke-width="1.5"><path d="M4 8 C8 5 13 5 17.5 7 C18 12 16.5 17 12 19 C7.5 17 4.5 13 4 8Z M12.2 13.5 C16.5 11.5 21.5 11.5 26.5 14 C26.5 20 23.5 25.5 19 28 C14.5 25.5 12 20 12.2 13.5Z M16 22 C18 24 21 24 23 22 M16 17.5 L18 18 M21 18 L23 17.5 M7.5 10 L9.5 10.5 M12 10.5 L14 10"/></svg>
<div class="a" style="left:199px;top:257px;width:5px;height:1px;background:#454545"></div>
<div class="a" style="left:166px;top:241px;width:34px;height:34px;border:1px solid #454545;border-radius:4px"></div>
<svg class="a" style="left:166px;top:241px;stroke-width:1.1px" width="34" height="34" viewBox="0 0 34 34" fill="none" stroke="#d0d0d0" stroke-width="1.5"><path d="M9 17 V9.5 C9 8 11 8 11 9.5 V16 M11 15 V7.5 C11 6 13.5 6 13.5 7.5 V15 M13.5 15 V7 C13.5 5.5 16 5.5 16 7 V15 M16 15 V8.5 C16 7 18.5 7 18.5 8.5 V18 L21 15.5 C22 14.5 23.5 15.5 22.5 17 L18 25 C17 26.5 15.5 27 13.5 27 H12 C10 27 9 25 9 23Z"/></svg>
<div class="a" style="left:236px;top:257px;width:5px;height:1px;background:#454545"></div>
<div class="a" style="left:203px;top:241px;width:34px;height:34px;border:1px solid #454545;border-radius:4px"></div>
<svg class="a" style="left:203px;top:241px;stroke-width:1.1px" width="34" height="34" viewBox="0 0 34 34" fill="none" stroke="#d0d0d0" stroke-width="1.5"><path d="M5.6 7 H20 V25.5 H5.6Z M20 9.5 H23 V25.5 H8.5 M8.5 20 H17 M8.5 22.5 H17 M10.5 17.5 L15 11 M12 13 L14.5 14 M15 11 A1 1 0 1 1 15.1 11"/></svg>
<div class="a" style="left:274px;top:257px;width:5px;height:1px;background:#454545"></div>
<div class="a" style="left:241px;top:241px;width:34px;height:34px;border:1px solid #454545;border-radius:4px"></div>
<div class="a" style="left:311px;top:257px;width:5px;height:1px;background:#454545"></div>
<div class="a" style="left:278px;top:241px;width:34px;height:34px;border:1px solid #454545;border-radius:4px"></div>
<div class="a" style="left:349px;top:257px;width:5px;height:1px;background:#454545"></div>
<div class="a" style="left:316px;top:241px;width:34px;height:34px;border:1px solid #454545;border-radius:4px"></div>
<div class="a" style="left:387px;top:257px;width:5px;height:1px;background:#454545"></div>
<div class="a" style="left:354px;top:241px;width:34px;height:34px;border:1px solid #454545;border-radius:4px"></div>
<div class="a" style="left:424px;top:257px;width:5px;height:1px;background:#454545"></div>
<div class="a" style="left:391px;top:241px;width:34px;height:34px;border:1px solid #454545;border-radius:4px"></div>
<div class="a" style="left:462px;top:257px;width:5px;height:1px;background:#454545"></div>
<div class="a" style="left:429px;top:241px;width:34px;height:34px;border:1px solid #454545;border-radius:4px"></div>
<div class="a" style="left:500px;top:257px;width:5px;height:1px;background:#454545"></div>
<div class="a" style="left:467px;top:241px;width:34px;height:34px;border:1px solid #454545;border-radius:4px"></div>
<div class="a" style="left:537px;top:257px;width:5px;height:1px;background:#454545"></div>
<div class="a" style="left:504px;top:241px;width:34px;height:34px;border:1px solid #454545;border-radius:4px"></div>
<div class="a" style="left:542px;top:241px;width:34px;height:34px;border:1px solid #454545;border-radius:4px"></div>
<svg class="a" style="left:563px;top:276px;" width="13" height="13" viewBox="0 0 13 13" fill="none" stroke="#d0d0d0" stroke-width="1.5"><path d="M1.5 7l5-5 5 5 M1.5 12l5-5 5 5" stroke="#cfcfcf" stroke-width="1.3"/></svg>
<div class="a" style="left:16px;top:291px;width:279px;height:38px;background:#82bd14;border-radius:5px 0 0 0"></div>
<div class="t" style="left:-45.0px;top:303.5px;width:400px;text-align:center;font-size:11.8px;line-height:14px;color:#111;font-weight:bold">Template</div>
<div class="a" style="left:295px;top:291px;width:280px;height:39px;border-top:1px solid #4a4a4a;border-right:1px solid #4a4a4a;border-radius:0 6px 0 0"></div>
<div class="t" style="left:234.0px;top:303.5px;width:400px;text-align:center;font-size:12px;line-height:14px;color:#dedede;font-weight:bold">Custom</div>
<div class="a" style="left:295px;top:329px;width:280px;height:1px;background:#4a4a4a"></div>
<div class="a" style="left:15px;top:329px;width:561px;height:706px;border-left:1px solid #4a4a4a;border-right:1px solid #4a4a4a;border-bottom:1px solid #4a4a4a"></div>
<div class="a" style="left:25px;top:339px;width:220px;height:566px;border:1px solid #4a4a4a"></div>
<div class="a" style="left:136px;top:339px;width:109px;height:28px;border-left:1px solid #4a4a4a;border-bottom:1px solid #4a4a4a"></div>
<div class="t" style="left:-120.0px;top:346.0px;width:400px;text-align:center;font-size:12px;line-height:14px;color:#8cc63f;font-weight:bold">Item</div>
<div class="t" style="left:-9.0px;top:346.0px;width:400px;text-align:center;font-size:12.3px;line-height:14px;color:#dedede;font-weight:bold">Pack</div>
<div class="a" style="left:26px;top:370px;width:218px;height:523px;overflow:hidden">
<svg class="a" style="left:7px;top:14.5px;" width="8" height="8" viewBox="0 0 8 8" fill="none" stroke="#d0d0d0" stroke-width="1.5"><path d="M7 0.5V7H0.5z" fill="#bdbdbd" stroke="none"/></svg>
<svg class="a" style="left:19px;top:9.5px;stroke-width:1.1px" width="18" height="17" viewBox="0 0 18 17" fill="none" stroke="#d0d0d0" stroke-width="1.5"><path d="M4 4h10v10h-10z M1.5 6.5v9h10"/></svg>
<div class="t" style="left:40px;top:10.5px;font-size:12.3px;line-height:14px;color:#d8d8d8">All</div>
<svg class="a" style="left:23px;top:39.5px;" width="8" height="8" viewBox="0 0 8 8" fill="none" stroke="#d0d0d0" stroke-width="1.5"><path d="M7 0.5V7H0.5z" fill="#bdbdbd" stroke="none"/></svg>
<svg class="a" style="left:35px;top:34.5px;stroke-width:1.1px" width="18" height="17" viewBox="0 0 18 17" fill="none" stroke="#d0d0d0" stroke-width="1.5"><path d="M1.5 3.5h5l1.5 1.5h7 M1.5 3.5v11h14v-9.5h-14"/></svg>
<div class="t" style="left:56px;top:35.5px;font-size:12.3px;line-height:14px;color:#d8d8d8">Project</div>
<svg class="a" style="left:40px;top:62.5px;" width="7" height="10" viewBox="0 0 7 10" fill="none" stroke="#d0d0d0" stroke-width="1.5"><path d="M0.5 0.5L6 5L0.5 9.5z" fill="#e0e0e0" stroke="none"/></svg>
<svg class="a" style="left:51px;top:59.5px;stroke-width:1.1px" width="18" height="17" viewBox="0 0 18 17" fill="none" stroke="#d0d0d0" stroke-width="1.5"><path d="M1.5 3.5h5l1.5 1.5h7 M1.5 3.5v11h14v-9.5h-14"/></svg>
<div class="t" style="left:72px;top:60.5px;font-size:12.3px;line-height:14px;color:#d8d8d8">CC Project</div>
<svg class="a" style="left:24px;top:87.5px;" width="7" height="10" viewBox="0 0 7 10" fill="none" stroke="#d0d0d0" stroke-width="1.5"><path d="M0.5 0.5L6 5L0.5 9.5z" fill="#e0e0e0" stroke="none"/></svg>
<svg class="a" style="left:35px;top:84.5px;stroke-width:1.1px" width="18" height="17" viewBox="0 0 18 17" fill="none" stroke="#d0d0d0" stroke-width="1.5"><path d="M4 1.5a1.5 1.5 0 0 1 0 3 1.5 1.5 0 0 1 0-3 M4 5c-2 0-2 3-1.5 6l0.8 3.5h1.4l0.8-3.5c.5-3 .5-6-1.5-6 M12 1.5a1.5 1.5 0 0 1 0 3 1.5 1.5 0 0 1 0-3 M12 5c-2 0-2 3-1.5 6l.8 3.5h1.4l.8-3.5c.5-3 .5-6-1.5-6"/></svg>
<div class="t" style="left:56px;top:85.5px;font-size:12.3px;line-height:14px;color:#d8d8d8">Actor</div>
<svg class="a" style="left:24px;top:112.5px;" width="7" height="10" viewBox="0 0 7 10" fill="none" stroke="#d0d0d0" stroke-width="1.5"><path d="M0.5 0.5L6 5L0.5 9.5z" fill="#e0e0e0" stroke="none"/></svg>
<svg class="a" style="left:35px;top:109.5px;stroke-width:1.1px" width="18" height="17" viewBox="0 0 18 17" fill="none" stroke="#d0d0d0" stroke-width="1.5"><circle cx="9" cy="6" r="4.5"/><circle cx="5.5" cy="11" r="4"/><path d="M12 9a3.5 3.5 0 1 1-3 6" fill="#d0d0d0"/></svg>
<div class="t" style="left:56px;top:110.5px;font-size:12.3px;line-height:14px;color:#d8d8d8">Skin</div>
<svg class="a" style="left:24px;top:137.5px;" width="7" height="10" viewBox="0 0 7 10" fill="none" stroke="#d0d0d0" stroke-width="1.5"><path d="M0.5 0.5L6 5L0.5 9.5z" fill="#e0e0e0" stroke="none"/></svg>
<svg class="a" style="left:35px;top:134.5px;stroke-width:1.1px" width="18" height="17" viewBox="0 0 18 17" fill="none" stroke="#d0d0d0" stroke-width="1.5"><path d="M2 2h5v3h-5z M3 5h3v10h-3z M11 2l2-1v4h-2z M10 5h4v3h-4z M9.5 8h5v7h-5z"/></svg>
<div class="t" style="left:56px;top:135.5px;font-size:12.3px;line-height:14px;color:#d8d8d8">Makeup</div>
<svg class="a" style="left:24px;top:162.5px;" width="7" height="10" viewBox="0 0 7 10" fill="none" stroke="#d0d0d0" stroke-width="1.5"><path d="M0.5 0.5L6 5L0.5 9.5z" fill="#e0e0e0" stroke="none"/></svg>
<svg class="a" style="left:35px;top:159.5px;stroke-width:1.1px" width="18" height="17" viewBox="0 0 18 17" fill="none" stroke="#d0d0d0" stroke-width="1.5"><path d="M4 15c-3-3-3-9 0-12 3-2 7-2 10 0 3 3 3 9 0 12 M4 15c1-2 1-5 1-6 2 0 5-1 6-3 1 2 2 6 2 9"/></svg>
<div class="t" style="left:56px;top:160.5px;font-size:12.3px;line-height:14px;color:#d8d8d8">Hair</div>
<svg class="a" style="left:24px;top:187.5px;" width="7" height="10" viewBox="0 0 7 10" fill="none" stroke="#d0d0d0" stroke-width="1.5"><path d="M0.5 0.5L6 5L0.5 9.5z" fill="#e0e0e0" stroke="none"/></svg>
<svg class="a" style="left:35px;top:184.5px;stroke-width:1.1px" width="18" height="17" viewBox="0 0 18 17" fill="none" stroke="#d0d0d0" stroke-width="1.5"><path d="M5 2l-3 3v5h3v-8h5l2 3-1 2h-2v8h-4 M8 9h7v7h-3v-3h-1v3h-3z"/></svg>
<div class="t" style="left:56px;top:185.5px;font-size:12.3px;line-height:14px;color:#d8d8d8">Cloth</div>
<svg class="a" style="left:24px;top:212.5px;" width="7" height="10" viewBox="0 0 7 10" fill="none" stroke="#d0d0d0" stroke-width="1.5"><path d="M0.5 0.5L6 5L0.5 9.5z" fill="#e0e0e0" stroke="none"/></svg>
<svg class="a" style="left:35px;top:209.5px;stroke-width:1.1px" width="18" height="17" viewBox="0 0 18 17" fill="none" stroke="#d0d0d0" stroke-width="1.5"><path d="M5 2h8v6h-8z M1 8h16 M3 11l12 5 M3 16l12-5 M3 11v5 M15 11v5"/></svg>
<div class="t" style="left:56px;top:210.5px;font-size:12.3px;line-height:14px;color:#d8d8d8">Accessory</div>
<svg class="a" style="left:23px;top:239.5px;" width="8" height="8" viewBox="0 0 8 8" fill="none" stroke="#d0d0d0" stroke-width="1.5"><path d="M7 0.5V7H0.5z" fill="#bdbdbd" stroke="none"/></svg>
<svg class="a" style="left:35px;top:234.5px;stroke-width:1.1px" width="18" height="17" viewBox="0 0 18 17" fill="none" stroke="#d0d0d0" stroke-width="1.5"><path d="M7 1h3v4h-3z M8.5 5v5 M3 6.5h11 M3 6v2 M14 6v2 M5 10h7 M5 10v6 M12 10v6"/></svg>
<div class="t" style="left:56px;top:235.5px;font-size:12.3px;line-height:14px;color:#d8d8d8">Animation</div>
<svg class="a" style="left:40px;top:262.5px;" width="7" height="10" viewBox="0 0 7 10" fill="none" stroke="#d0d0d0" stroke-width="1.5"><path d="M0.5 0.5L6 5L0.5 9.5z" fill="#e0e0e0" stroke="none"/></svg>
<svg class="a" style="left:51px;top:259.5px;stroke-width:1.1px" width="18" height="17" viewBox="0 0 18 17" fill="none" stroke="#d0d0d0" stroke-width="1.5"><path d="M3 3c2-2 7-2 9 0 M4 3l1 4h4l2-4 M6 7l-2 5 M8 7l4 3 M6 1h2"/></svg>
<div class="t" style="left:72px;top:260.5px;font-size:12.3px;line-height:14px;color:#d8d8d8">Motion-Plus</div>
<svg class="a" style="left:40px;top:287.5px;" width="7" height="10" viewBox="0 0 7 10" fill="none" stroke="#d0d0d0" stroke-width="1.5"><path d="M0.5 0.5L6 5L0.5 9.5z" fill="#e0e0e0" stroke="none"/></svg>
<svg class="a" style="left:51px;top:284.5px;stroke-width:1.1px" width="18" height="17" viewBox="0 0 18 17" fill="none" stroke="#d0d0d0" stroke-width="1.5"><path d="M10 1h2v4h-2z M3 15l5-6 2 2h3 M6 8l3-2 2 2 M8 9l-3 3h4"/></svg>
<div class="t" style="left:72px;top:285.5px;font-size:12.3px;line-height:14px;color:#d8d8d8">Motion</div>
<svg class="a" style="left:39px;top:314.5px;" width="8" height="8" viewBox="0 0 8 8" fill="none" stroke="#d0d0d0" stroke-width="1.5"><path d="M7 0.5V7H0.5z" fill="#bdbdbd" stroke="none"/></svg>
<svg class="a" style="left:51px;top:309.5px;stroke-width:1.1px" width="18" height="17" viewBox="0 0 18 17" fill="none" stroke="#d0d0d0" stroke-width="1.5"><path d="M7 1h3v4h-3z M8.5 5v5 M3 6.5h11 M3 6v2 M14 6v2 M5 10h7 M5 10v6 M12 10v6"/></svg>
<div class="t" style="left:72px;top:310.5px;font-size:12.3px;line-height:14px;color:#d8d8d8">Pose</div>
<div class="t" style="left:68px;top:335.5px;font-size:12.3px;line-height:14px;color:#d8d8d8">1.Male Pose</div>
<div class="t" style="left:68px;top:360.5px;font-size:12.3px;line-height:14px;color:#d8d8d8">2.Female Pose</div>
<div class="a" style="left:0px;top:380.0px;width:203px;height:25px;background:#000"></div>
<div class="t" style="left:68px;top:385.5px;font-size:12.3px;line-height:14px;color:#d8d8d8">Calibration</div>
<div class="t" style="left:68px;top:410.5px;font-size:12.3px;line-height:14px;color:#d8d8d8">Checking Pose</div>
<svg class="a" style="left:40px;top:437.5px;" width="7" height="10" viewBox="0 0 7 10" fill="none" stroke="#d0d0d0" stroke-width="1.5"><path d="M0.5 0.5L6 5L0.5 9.5z" fill="#e0e0e0" stroke="none"/></svg>
<svg class="a" style="left:51px;top:434.5px;stroke-width:1.1px" width="18" height="17" viewBox="0 0 18 17" fill="none" stroke="#d0d0d0" stroke-width="1.5"><path d="M2 3c2-2 6-2 8 0 0 4-2 6-4 7-2-1-4-3-4-7z M7 8c2-2 6-2 8 0 0 4-2 6-4 7-2-1-4-3-4-7z"/></svg>
<div class="t" style="left:72px;top:435.5px;font-size:12.3px;line-height:14px;color:#d8d8d8">Expression</div>
<svg class="a" style="left:40px;top:462.5px;" width="7" height="10" viewBox="0 0 7 10" fill="none" stroke="#d0d0d0" stroke-width="1.5"><path d="M0.5 0.5L6 5L0.5 9.5z" fill="#e0e0e0" stroke="none"/></svg>
<svg class="a" style="left:51px;top:459.5px;stroke-width:1.1px" width="18" height="17" viewBox="0 0 18 17" fill="none" stroke="#d0d0d0" stroke-width="1.5"><path d="M5 9v-5 M7.5 8v-6 M10 8v-6 M12.5 9v-4 M5 9c0 4 1 7 4 7s4-3 4-6"/></svg>
<div class="t" style="left:72px;top:460.5px;font-size:12.3px;line-height:14px;color:#d8d8d8">Gesture</div>
<svg class="a" style="left:51px;top:484.5px;stroke-width:1.1px" width="18" height="17" viewBox="0 0 18 17" fill="none" stroke="#d0d0d0" stroke-width="1.5"><path d="M3 2h11v13h-11z M5 11h7 M5 13h7 M6 9l4-5"/></svg>
<div class="t" style="left:72px;top:485.5px;font-size:12.3px;line-height:14px;color:#d8d8d8">Persona</div>
<svg class="a" style="left:24px;top:512.5px;" width="7" height="10" viewBox="0 0 7 10" fill="none" stroke="#d0d0d0" stroke-width="1.5"><path d="M0.5 0.5L6 5L0.5 9.5z" fill="#e0e0e0" stroke="none"/></svg>
<svg class="a" style="left:35px;top:509.5px;stroke-width:1.1px" width="18" height="17" viewBox="0 0 18 17" fill="none" stroke="#d0d0d0" stroke-width="1.5"><path d="M1 14h16 M2 14v-11h14v11 M2 3c3 3 3 7 3 11 M16 3c-3 3-3 7-3 11"/></svg>
<div class="t" style="left:56px;top:510.5px;font-size:12.3px;line-height:14px;color:#d8d8d8">Stage</div>
</div>
<div class="a" style="left:233px;top:383px;width:7px;height:407px;background:#555;border-radius:3px"></div>
<div class="a" style="left:245px;top:690px;width:3px;height:5px;background:#3a3a3a"></div>
<div class="a" style="left:245px;top:699px;width:3px;height:5px;background:#3a3a3a"></div>
<div class="a" style="left:245px;top:708px;width:3px;height:5px;background:#3a3a3a"></div>
<div class="a" style="left:245px;top:717px;width:3px;height:5px;background:#3a3a3a"></div>
<div class="a" style="left:245px;top:726px;width:3px;height:5px;background:#3a3a3a"></div>
<div class="a" style="left:245px;top:735px;width:3px;height:5px;background:#3a3a3a"></div>
<div class="a" style="left:245px;top:744px;width:3px;height:5px;background:#3a3a3a"></div>
<div class="a" style="left:245px;top:753px;width:3px;height:5px;background:#3a3a3a"></div>
<div class="a" style="left:245px;top:762px;width:3px;height:5px;background:#3a3a3a"></div>
<div class="a" style="left:245px;top:771px;width:3px;height:5px;background:#3a3a3a"></div>
<div class="a" style="left:25px;top:910px;width:220px;height:60px;border:1px solid #4a4a4a"></div>
<div class="a" style="left:30px;top:918px;width:15px;height:15px;border:1px solid #bdbdbd"></div>
<div class="t" style="left:54px;top:918.5px;font-size:12.3px;line-height:14px;color:#d8d8d8">Show Subfolder Items</div>
<div class="a" style="left:30px;top:946px;width:15px;height:15px;border:1px solid #bdbdbd"></div>
<div class="t" style="left:54px;top:946.0px;font-size:12.3px;line-height:14px;color:#d8d8d8">Filter by Base Type</div>
<div class="a" style="left:249px;top:339px;width:226px;height:25px;border:1px solid #4a4a4a"></div>
<svg class="a" style="left:257px;top:344px;stroke-width:1.3px" width="15" height="15" viewBox="0 0 15 15" fill="none" stroke="#d0d0d0" stroke-width="1.5"><circle cx="6" cy="6" r="4.5"/><path d="M9.3 9.3L13.5 13.5"/></svg>
<div class="t" style="left:274px;top:345.0px;font-size:12.3px;line-height:14px;color:#575757">Search</div>
<div class="a" style="left:480px;top:339px;width:25px;height:25px;border:1px solid #4a4a4a"></div>
<svg class="a" style="left:482px;top:341px;stroke-width:1.1px" width="21" height="21" viewBox="0 0 21 21" fill="none" stroke="#d0d0d0" stroke-width="1.5"><path d="M3 4h12l-4.5 5v6l-3-2v-4z"/><circle cx="15" cy="12" r="2"/><path d="M15 8.5v1 M15 14.5v1 M11.5 12h1 M17.5 12h1"/></svg>
<div class="a" style="left:510px;top:339px;width:25px;height:25px;border:1px solid #4a4a4a"></div>
<svg class="a" style="left:512px;top:341px;stroke-width:1.2px" width="21" height="21" viewBox="0 0 21 21" fill="none" stroke="#d0d0d0" stroke-width="1.5"><path d="M5 13a6 6 0 0 1 9-7 M16 8a6 6 0 0 1-9 7 M13 3l1.5 3-3 1 M8 18l-1.5-3 3-1"/></svg>
<svg class="a" style="left:542px;top:341px;stroke-width:1.3px" width="22" height="22" viewBox="0 0 22 22" fill="none" stroke="#d0d0d0" stroke-width="1.5"><circle cx="11" cy="11" r="9.5"/><path d="M6.5 9l4.5 4.5 4.5-4.5"/></svg>
<div class="a" style="left:249px;top:374px;width:316px;height:25px;border:1px solid #4a4a4a"></div>
<div class="t" style="left:264px;top:379.5px;font-size:11.6px;line-height:14px;color:#dadada">Sort by Category : A to Z</div>
<svg class="a" style="left:549px;top:383px;" width="12" height="7" viewBox="0 0 12 7" fill="none" stroke="#d0d0d0" stroke-width="1.5"><path d="M0 0h11l-5.5 6z" fill="#d8d8d8" stroke="none"/></svg>
<div class="a" style="left:249px;top:414px;width:316px;height:556px;border:1px solid #4a4a4a"></div>
<div class="a" style="left:254px;top:424px;width:132px;height:170px;border:3px solid #8dc63f;background:#000"></div>
<div class="a" style="left:259px;top:427px;width:120px;height:120px;background:#323232"></div>
<svg class="a" style="left:259px;top:427px" width="120" height="120" viewBox="0 0 120 120"><defs><linearGradient id="mg0" gradientUnits="userSpaceOnUse" x1="42" y1="0" x2="77" y2="0"><stop offset="0" stop-color="#a0a0a0"/><stop offset="0.3" stop-color="#d6d6d6"/><stop offset="0.55" stop-color="#ededed"/><stop offset="0.8" stop-color="#d0d0d0"/><stop offset="1" stop-color="#9c9c9c"/></linearGradient></defs><g fill="url(#mg0)" stroke="none"><ellipse cx="59.5" cy="14.3" rx="5.4" ry="7.2"/><path d="M57.0 21.5 L57.0 25.0 L52.0 26.8 L49.5 29.0 L49.8 34.0 L50.5 38.0 L51.8 43.0 L52.2 48.0 L50.5 53.0 L49.2 57.0 L48.6 62.0 L47.9 68.0 L47.2 78.0 L46.8 85.0 L46.1 93.0 L47.2 108.0 L42.5 113.5 L50.5 114.0 L51.5 108.0 L54.1 94.0 L55.2 85.0 L57.1 72.0 L58.5 66.0 L59.5 63.5 L59.5 63.5 L60.5 66.0 L61.9 72.0 L63.8 85.0 L64.9 94.0 L67.5 108.0 L68.5 114.0 L76.5 113.5 L71.8 108.0 L72.9 93.0 L72.2 85.0 L71.8 78.0 L71.1 68.0 L70.4 62.0 L69.8 57.0 L68.5 53.0 L66.8 48.0 L67.2 43.0 L68.5 38.0 L69.2 34.0 L69.5 29.0 L67.0 26.8 L62.0 25.0 L62.0 21.5Z"/></g><path d="M49.5 28.5 L37.7 43.4" stroke="#d8d8d8" stroke-width="4.4" stroke-linecap="round" fill="none"/><path d="M37.7 43.4 L27.4 52.5" stroke="#d8d8d8" stroke-width="3.2" stroke-linecap="round" fill="none"/><path d="M27.4 52.5 L23 59.4" stroke="#d8d8d8" stroke-width="3.4" stroke-linecap="round" fill="none"/><path d="M69.5 28.5 L81.3 43.4" stroke="#d8d8d8" stroke-width="4.4" stroke-linecap="round" fill="none"/><path d="M81.3 43.4 L91.6 52.5" stroke="#d8d8d8" stroke-width="3.2" stroke-linecap="round" fill="none"/><path d="M91.6 52.5 L96 59.4" stroke="#d8d8d8" stroke-width="3.4" stroke-linecap="round" fill="none"/></svg>
<div class="t" style="left:119.0px;top:552.5px;width:400px;text-align:center;font-size:12.3px;line-height:14px;color:#dadada">A-Pose</div>
<div class="a" style="left:389px;top:427px;width:120px;height:120px;background:#323232"></div>
<svg class="a" style="left:389px;top:427px" width="120" height="120" viewBox="0 0 120 120"><defs><linearGradient id="mg1" gradientUnits="userSpaceOnUse" x1="42" y1="0" x2="77" y2="0"><stop offset="0" stop-color="#a0a0a0"/><stop offset="0.3" stop-color="#d6d6d6"/><stop offset="0.55" stop-color="#ededed"/><stop offset="0.8" stop-color="#d0d0d0"/><stop offset="1" stop-color="#9c9c9c"/></linearGradient></defs><g fill="url(#mg1)" stroke="none"><ellipse cx="59.5" cy="14.3" rx="5.4" ry="7.2"/><path d="M57.0 21.5 L57.0 25.0 L52.0 26.8 L49.5 29.0 L49.8 34.0 L50.5 38.0 L51.8 43.0 L52.2 48.0 L50.5 53.0 L49.2 57.0 L48.6 62.0 L47.6 68.0 L46.6 78.0 L46.0 85.0 L45.2 93.0 L46.2 108.0 L41.5 113.5 L49.5 114.0 L50.5 108.0 L53.2 94.0 L54.4 85.0 L56.7 72.0 L58.5 66.0 L59.5 63.5 L59.5 63.5 L60.5 66.0 L62.3 72.0 L64.6 85.0 L65.8 94.0 L68.5 108.0 L69.5 114.0 L77.5 113.5 L72.8 108.0 L73.8 93.0 L73.0 85.0 L72.4 78.0 L71.4 68.0 L70.4 62.0 L69.8 57.0 L68.5 53.0 L66.8 48.0 L67.2 43.0 L68.5 38.0 L69.2 34.0 L69.5 29.0 L67.0 26.8 L62.0 25.0 L62.0 21.5Z"/></g><path d="M49.5 28.5 L38 45" stroke="#d8d8d8" stroke-width="4.4" stroke-linecap="round" fill="none"/><path d="M38 45 L26 56" stroke="#d8d8d8" stroke-width="3.2" stroke-linecap="round" fill="none"/><path d="M26 56 L22 61" stroke="#d8d8d8" stroke-width="3.4" stroke-linecap="round" fill="none"/><path d="M69.5 28.5 L81 45" stroke="#d8d8d8" stroke-width="4.4" stroke-linecap="round" fill="none"/><path d="M81 45 L93 56" stroke="#d8d8d8" stroke-width="3.2" stroke-linecap="round" fill="none"/><path d="M93 56 L97 61" stroke="#d8d8d8" stroke-width="3.4" stroke-linecap="round" fill="none"/></svg>
<div class="t" style="left:249.0px;top:552.5px;width:400px;text-align:center;font-size:12.3px;line-height:14px;color:#dadada">Open A</div>
<div class="a" style="left:259px;top:607px;width:120px;height:120px;background:#323232"></div>
<svg class="a" style="left:259px;top:607px" width="120" height="120" viewBox="0 0 120 120"><defs><linearGradient id="mg2" gradientUnits="userSpaceOnUse" x1="42" y1="0" x2="77" y2="0"><stop offset="0" stop-color="#a0a0a0"/><stop offset="0.3" stop-color="#d6d6d6"/><stop offset="0.55" stop-color="#ededed"/><stop offset="0.8" stop-color="#d0d0d0"/><stop offset="1" stop-color="#9c9c9c"/></linearGradient></defs><g fill="url(#mg2)" stroke="none"><ellipse cx="59.5" cy="14.3" rx="5.4" ry="7.2"/><path d="M57.0 21.5 L57.0 25.0 L52.0 26.8 L49.5 29.0 L49.8 34.0 L50.5 38.0 L51.8 43.0 L52.2 48.0 L50.5 53.0 L49.2 57.0 L48.6 62.0 L47.6 68.0 L46.6 78.0 L46.0 85.0 L45.2 93.0 L46.2 108.0 L41.5 113.5 L49.5 114.0 L50.5 108.0 L53.2 94.0 L54.4 85.0 L56.7 72.0 L58.5 66.0 L59.5 63.5 L59.5 63.5 L60.5 66.0 L62.3 72.0 L64.6 85.0 L65.8 94.0 L68.5 108.0 L69.5 114.0 L77.5 113.5 L72.8 108.0 L73.8 93.0 L73.0 85.0 L72.4 78.0 L71.4 68.0 L70.4 62.0 L69.8 57.0 L68.5 53.0 L66.8 48.0 L67.2 43.0 L68.5 38.0 L69.2 34.0 L69.5 29.0 L67.0 26.8 L62.0 25.0 L62.0 21.5Z"/></g><path d="M49.5 28.5 L37 43" stroke="#d8d8d8" stroke-width="4.4" stroke-linecap="round" fill="none"/><path d="M37 43 L26 52" stroke="#d8d8d8" stroke-width="3.2" stroke-linecap="round" fill="none"/><path d="M26 52 L21.5 58.6" stroke="#d8d8d8" stroke-width="3.4" stroke-linecap="round" fill="none"/><path d="M69.5 28.5 L82 43" stroke="#d8d8d8" stroke-width="4.4" stroke-linecap="round" fill="none"/><path d="M82 43 L93 52" stroke="#d8d8d8" stroke-width="3.2" stroke-linecap="round" fill="none"/><path d="M93 52 L97.5 58.6" stroke="#d8d8d8" stroke-width="3.4" stroke-linecap="round" fill="none"/></svg>
<div class="t" style="left:119.0px;top:732.5px;width:400px;text-align:center;font-size:12.3px;line-height:14px;color:#dadada">Open A_UE4</div>
<div class="a" style="left:389px;top:607px;width:120px;height:120px;background:#323232"></div>
<svg class="a" style="left:389px;top:607px" width="120" height="120" viewBox="0 0 120 120"><defs><linearGradient id="mg3" gradientUnits="userSpaceOnUse" x1="42" y1="0" x2="77" y2="0"><stop offset="0" stop-color="#a0a0a0"/><stop offset="0.3" stop-color="#d6d6d6"/><stop offset="0.55" stop-color="#ededed"/><stop offset="0.8" stop-color="#d0d0d0"/><stop offset="1" stop-color="#9c9c9c"/></linearGradient></defs><g fill="url(#mg3)" stroke="none"><ellipse cx="59.5" cy="14.3" rx="5.4" ry="7.2"/><path d="M57.0 21.5 L57.0 25.0 L52.0 26.8 L49.5 29.0 L49.8 34.0 L50.5 38.0 L51.8 43.0 L52.2 48.0 L50.5 53.0 L49.2 57.0 L48.6 62.0 L49.4 68.0 L50.2 78.0 L50.8 85.0 L50.6 93.0 L52.2 108.0 L47.5 113.5 L55.5 114.0 L56.5 108.0 L58.6 94.0 L59.2 85.0 L59.1 72.0 L58.5 66.0 L59.5 63.5 L59.5 63.5 L60.5 66.0 L59.9 72.0 L59.8 85.0 L60.4 94.0 L62.5 108.0 L63.5 114.0 L71.5 113.5 L66.8 108.0 L68.4 93.0 L68.2 85.0 L68.8 78.0 L69.6 68.0 L70.4 62.0 L69.8 57.0 L68.5 53.0 L66.8 48.0 L67.2 43.0 L68.5 38.0 L69.2 34.0 L69.5 29.0 L67.0 26.8 L62.0 25.0 L62.0 21.5Z"/></g><path d="M50 29 L48.5 46" stroke="#d8d8d8" stroke-width="4.4" stroke-linecap="round" fill="none"/><path d="M48.5 46 L47.5 62" stroke="#d8d8d8" stroke-width="3.2" stroke-linecap="round" fill="none"/><path d="M47.5 62 L47.5 69" stroke="#d8d8d8" stroke-width="3.4" stroke-linecap="round" fill="none"/><path d="M69 29 L70.5 46" stroke="#d8d8d8" stroke-width="4.4" stroke-linecap="round" fill="none"/><path d="M70.5 46 L71.5 62" stroke="#d8d8d8" stroke-width="3.2" stroke-linecap="round" fill="none"/><path d="M71.5 62 L71.5 69" stroke="#d8d8d8" stroke-width="3.4" stroke-linecap="round" fill="none"/></svg>
<div class="t" style="left:249.0px;top:732.5px;width:400px;text-align:center;font-size:12.3px;line-height:14px;color:#dadada">Stand Pose_F</div>
<div class="a" style="left:259px;top:787px;width:120px;height:120px;background:#323232"></div>
<svg class="a" style="left:259px;top:787px" width="120" height="120" viewBox="0 0 120 120"><defs><linearGradient id="mg4" gradientUnits="userSpaceOnUse" x1="42" y1="0" x2="77" y2="0"><stop offset="0" stop-color="#a0a0a0"/><stop offset="0.3" stop-color="#d6d6d6"/><stop offset="0.55" stop-color="#ededed"/><stop offset="0.8" stop-color="#d0d0d0"/><stop offset="1" stop-color="#9c9c9c"/></linearGradient></defs><g fill="url(#mg4)" stroke="none"><ellipse cx="59.5" cy="14.3" rx="5.4" ry="7.2"/><path d="M56.5 21.5 L56.5 25.0 L50.0 26.5 L46.5 29.0 L46.8 36.0 L48.0 44.0 L50.0 52.0 L49.8 58.0 L49.0 64.0 L48.8 72.0 L48.5 85.0 L48.0 94.0 L49.5 108.0 L46.0 113.5 L53.0 114.0 L54.0 108.0 L55.5 94.0 L56.0 85.0 L57.5 72.0 L58.5 66.0 L59.5 64.0 L59.5 64.0 L60.5 66.0 L61.5 72.0 L63.0 85.0 L63.5 94.0 L65.0 108.0 L66.0 114.0 L73.0 113.5 L69.5 108.0 L71.0 94.0 L70.5 85.0 L70.2 72.0 L70.0 64.0 L69.2 58.0 L69.0 52.0 L71.0 44.0 L72.2 36.0 L72.5 29.0 L69.0 26.5 L62.5 25.0 L62.5 21.5Z"/></g><path d="M47.5 29 L45 47" stroke="#d8d8d8" stroke-width="4.4" stroke-linecap="round" fill="none"/><path d="M45 47 L43.5 62" stroke="#d8d8d8" stroke-width="3.2" stroke-linecap="round" fill="none"/><path d="M43.5 62 L43.5 69" stroke="#d8d8d8" stroke-width="3.4" stroke-linecap="round" fill="none"/><path d="M71.5 29 L74 47" stroke="#d8d8d8" stroke-width="4.4" stroke-linecap="round" fill="none"/><path d="M74 47 L75.5 62" stroke="#d8d8d8" stroke-width="3.2" stroke-linecap="round" fill="none"/><path d="M75.5 62 L75.5 69" stroke="#d8d8d8" stroke-width="3.4" stroke-linecap="round" fill="none"/></svg>
<div class="t" style="left:119.0px;top:912.5px;width:400px;text-align:center;font-size:12.3px;line-height:14px;color:#dadada">Stand Pose_M</div>
<div class="a" style="left:389px;top:787px;width:120px;height:120px;background:#323232"></div>
<svg class="a" style="left:389px;top:787px" width="120" height="120" viewBox="0 0 120 120"><defs><linearGradient id="mg5" gradientUnits="userSpaceOnUse" x1="42" y1="0" x2="77" y2="0"><stop offset="0" stop-color="#a0a0a0"/><stop offset="0.3" stop-color="#d6d6d6"/><stop offset="0.55" stop-color="#ededed"/><stop offset="0.8" stop-color="#d0d0d0"/><stop offset="1" stop-color="#9c9c9c"/></linearGradient></defs><g fill="url(#mg5)" stroke="none"><ellipse cx="59.5" cy="14.3" rx="5.4" ry="7.2"/><path d="M57.0 21.5 L57.0 25.0 L52.0 26.8 L49.5 29.0 L49.8 34.0 L50.5 38.0 L51.8 43.0 L52.2 48.0 L50.5 53.0 L49.2 57.0 L48.6 62.0 L48.5 68.0 L48.4 78.0 L48.4 85.0 L47.9 93.0 L49.2 108.0 L44.5 113.5 L52.5 114.0 L53.5 108.0 L55.9 94.0 L56.8 85.0 L57.9 72.0 L58.5 66.0 L59.5 63.5 L59.5 63.5 L60.5 66.0 L61.1 72.0 L62.2 85.0 L63.1 94.0 L65.5 108.0 L66.5 114.0 L74.5 113.5 L69.8 108.0 L71.1 93.0 L70.6 85.0 L70.6 78.0 L70.5 68.0 L70.4 62.0 L69.8 57.0 L68.5 53.0 L66.8 48.0 L67.2 43.0 L68.5 38.0 L69.2 34.0 L69.5 29.0 L67.0 26.8 L62.0 25.0 L62.0 21.5Z"/></g><path d="M49.5 28 L33 28" stroke="#d8d8d8" stroke-width="4.4" stroke-linecap="round" fill="none"/><path d="M33 28 L15 27.5" stroke="#d8d8d8" stroke-width="3.2" stroke-linecap="round" fill="none"/><path d="M15 27.5 L6 27" stroke="#d8d8d8" stroke-width="3.4" stroke-linecap="round" fill="none"/><path d="M69.5 28 L86 28" stroke="#d8d8d8" stroke-width="4.4" stroke-linecap="round" fill="none"/><path d="M86 28 L104 27.5" stroke="#d8d8d8" stroke-width="3.2" stroke-linecap="round" fill="none"/><path d="M104 27.5 L113 27" stroke="#d8d8d8" stroke-width="3.4" stroke-linecap="round" fill="none"/></svg>
<div class="t" style="left:249.0px;top:912.5px;width:400px;text-align:center;font-size:12.3px;line-height:14px;color:#dadada">T-Pose</div>
<div class="a" style="left:548px;top:435px;width:7px;height:469px;background:#555;border-radius:3px"></div>
<div class="t" style="left:436px;top:948.0px;font-size:11.3px;line-height:14px;color:#dadada">Total : 6</div>
<svg class="a" style="left:484px;top:950px;" width="9" height="10" viewBox="0 0 9 10" fill="none" stroke="#d0d0d0" stroke-width="1.5"><path d="M8 0.5v9L0.5 5z" fill="#4e4e4e" stroke="none"/></svg>
<div class="t" style="left:502px;top:948.0px;font-size:11.8px;line-height:14px;color:#dadada">1</div>
<div class="t" style="left:517px;top:948.0px;font-size:11.8px;line-height:14px;color:#dadada">/</div>
<div class="t" style="left:528px;top:948.0px;font-size:11.8px;line-height:14px;color:#dadada">1</div>
<svg class="a" style="left:545px;top:950px;" width="9" height="10" viewBox="0 0 9 10" fill="none" stroke="#d0d0d0" stroke-width="1.5"><path d="M0.5 0.5v9L8 5z" fill="#4e4e4e" stroke="none"/></svg>
<div class="a" style="left:25px;top:994px;width:173px;height:25px;border:1px solid #4a4a4a"></div>
<div class="t" style="left:-88.5px;top:999.5px;width:400px;text-align:center;font-size:12.3px;line-height:14px;color:#dadada">Apply</div>
<div class="a" style="left:208px;top:994px;width:173px;height:25px;border:1px solid #4a4a4a"></div>
<div class="t" style="left:94.5px;top:999.5px;width:400px;text-align:center;font-size:12.3px;line-height:14px;color:#dadada">Save</div>
<div class="a" style="left:392px;top:994px;width:173px;height:25px;border:1px solid #4a4a4a"></div>
<div class="t" style="left:278.5px;top:999.5px;width:400px;text-align:center;font-size:12.3px;line-height:14px;color:#4e4e4e">Overwrite</div>
<div class="a" style="left:591px;top:149px;width:26px;height:900px;background:#282828"></div>
<div class="a" style="left:590px;top:149px;width:1px;height:900px;background:#a8a8a8"></div>
<div class="a" style="left:591px;top:149px;width:26px;height:122px;background:#4a4a4a;border-top:1px solid #a8a8a8;border-right:1px solid #a8a8a8;border-bottom:2px solid #a8a8a8;border-radius:0 3px 0 0"></div>
<div class="a" style="left:591px;top:271px;width:26px;height:122px;border-right:1px solid #a8a8a8;border-bottom:1px solid #a8a8a8"></div>
<div class="a" style="left:591px;top:393px;width:26px;height:121px;border-right:1px solid #a8a8a8;border-bottom:1px solid #a8a8a8"></div>
<div class="t" style="left:543px;top:203px;width:120px;height:14px;line-height:14px;text-align:center;font-size:12.3px;font-weight:bold;color:#d8d8d8;transform:rotate(90deg)">Content</div>
<div class="t" style="left:543px;top:325px;width:120px;height:14px;line-height:14px;text-align:center;font-size:12.3px;font-weight:bold;color:#d8d8d8;transform:rotate(90deg)">Scene</div>
<div class="t" style="left:543px;top:447px;width:120px;height:14px;line-height:14px;text-align:center;font-size:12.3px;font-weight:bold;color:#d8d8d8;transform:rotate(90deg)">Visual</div>
<div class="a" style="left:632px;top:149px;width:914px;height:756px;overflow:hidden;background:radial-gradient(ellipse 720px 600px at 440px 600px,#1a2427 0%,#152022 30%,#10171a 62%,#0c1114 100%)">
<svg class="a" style="left:0;top:0" width="914" height="756" viewBox="632 149 914 756">
<defs><filter id="blur" x="-30%" y="-30%" width="160%" height="160%" color-interpolation-filters="sRGB"><feGaussianBlur stdDeviation="2.5"/></filter></defs>
<g filter="url(#blur)" fill="#0b1012" opacity="0.9">
<path d="M600 500 L632 505 C650 508 673 515 690 525 C714 544 735 560 755 572 C775 585 796 593 816 601 C837 609 860 616 878 621 C900 628 918 634 940 641 C968 650 990 660 1010 670 C1040 682 1070 695 1090 700 C1110 708 1130 716 1150 730 L1145 742 C1120 735 1100 722 1085 714 C1060 702 1030 690 1000 680 C970 668 950 660 930 655 C900 646 870 638 850 640 C855 650 861 662 865 680 C869 691 880 696 898 699 C920 706 939 716 960 724 C980 732 1000 742 1010 748 L1010 790 C1030 790 1060 800 1080 812 L1100 826 L1090 832 C1060 822 1030 815 1000 805 C975 815 968 850 962 882 L950 880 C940 860 930 840 918 822 C900 808 890 802 878 797 C860 788 850 782 837 777 C815 770 800 768 790 755 C780 745 770 738 765 728 C758 712 752 704 745 698 C730 688 722 680 714 675 C700 665 685 656 673 654 C660 654 645 662 632 666 L600 670Z"/>
</g></svg>
<div class="a" style="left:180px;top:47px;width:15px;height:1px;background:#e6e49a"></div>
<div class="a" style="left:180px;top:47px;width:1px;height:74px;background:#e6e49a"></div>
<div class="a" style="left:194px;top:46px;width:45px;height:1px;background:#e6e49a"></div>
<div class="a" style="left:194px;top:46px;width:1px;height:71px;background:#e6e49a"></div>
<div class="a" style="left:594px;top:45px;width:44px;height:1px;background:#e6e49a"></div>
<div class="a" style="left:637px;top:45px;width:1px;height:72px;background:#e6e49a"></div>
<div class="a" style="left:601px;top:47px;width:47px;height:1px;background:#e6e49a"></div>
<div class="a" style="left:647px;top:47px;width:1px;height:75px;background:#e6e49a"></div>
<div class="a" style="left:190px;top:695px;width:1px;height:62px;background:#e6e49a"></div>
<div class="a" style="left:203px;top:663px;width:1px;height:66px;background:#e6e49a"></div>
<div class="a" style="left:203px;top:728px;width:44px;height:1px;background:#e6e49a"></div>
<div class="a" style="left:631px;top:663px;width:1px;height:66px;background:#e6e49a"></div>
<div class="a" style="left:588px;top:728px;width:44px;height:1px;background:#e6e49a"></div>
<div class="a" style="left:640px;top:696px;width:1px;height:61px;background:#e6e49a"></div>
<svg class="a" style="left:0;top:0" width="914" height="756" viewBox="632 149 914 756">
<defs>
<linearGradient id="skinA" x1="0" y1="0" x2="0" y2="1"><stop offset="0" stop-color="#ebcdb6"/><stop offset="0.6" stop-color="#e6c4ab"/><stop offset="1" stop-color="#dcb49c"/></linearGradient>
<linearGradient id="skinL" x1="0" y1="0" x2="1" y2="0"><stop offset="0" stop-color="#b08870"/><stop offset="0.4" stop-color="#e6c2a8"/><stop offset="0.7" stop-color="#dcb59c"/><stop offset="1" stop-color="#a88068"/></linearGradient>
<linearGradient id="hairG" x1="0" y1="0" x2="1" y2="0"><stop offset="0" stop-color="#3e2c22"/><stop offset="0.3" stop-color="#6a503e"/><stop offset="0.7" stop-color="#5e4534"/><stop offset="1" stop-color="#3e2c22"/></linearGradient>
<radialGradient id="faceG" cx="0.45" cy="0.45" r="0.6"><stop offset="0" stop-color="#f0d8c6"/><stop offset="0.7" stop-color="#e2c2ab"/><stop offset="1" stop-color="#c49e86"/></radialGradient>
<filter id="soft" x="-50%" y="-50%" width="200%" height="200%" color-interpolation-filters="sRGB"><feGaussianBlur stdDeviation="6"/></filter>
<linearGradient id="dressG" x1="0" y1="0" x2="1" y2="0"><stop offset="0" stop-color="#0c0c0c"/><stop offset="0.5" stop-color="#1c1c1c"/><stop offset="1" stop-color="#0b0b0b"/></linearGradient>
</defs>
<path d="M1010 316 C1000 318 990 322 982 330 C974 340 970 348 964 357 C956 368 946 380 934 389 C922 398 910 407 898 418 C890 426 886 434 882 440 C874 450 866 458 859 466 C852 474 844 480 839 486 C834 494 830 502 828 510 C826 516 827 524 830 529 C833 529 834 526 834 520 C834 514 836 508 839 506 C842 508 843 514 845 519 L847 522 C850 521 851 516 852 510 C854 502 856 498 859 493 C862 486 864 478 867 473 C878 460 890 450 902 440 C912 432 922 420 936 411 C948 404 960 396 972 388 C980 383 988 374 993 364 L1012 330Z" fill="url(#skinA)"/>
<path d="M 1085 316 C 1095 318 1105 322 1113 330 C 1121 340 1125 348 1131 357 C 1139 368 1149 380 1161 389 C 1173 398 1185 407 1197 418 C 1205 426 1209 434 1213 440 C 1221 450 1229 458 1236 466 C 1243 474 1251 480 1256 486 C 1261 494 1265 502 1267 510 C 1269 516 1268 524 1265 529 C 1262 529 1261 526 1261 520 C 1261 514 1259 508 1256 506 C 1253 508 1252 514 1250 519 L 1248 522 C 1245 521 1244 516 1243 510 C 1241 502 1239 498 1236 493 C 1233 486 1231 478 1228 473 C 1217 460 1205 450 1193 440 C 1183 432 1173 420 1159 411 C 1147 404 1135 396 1123 388 C 1115 383 1107 374 1102 364 L 1083 330 Z" fill="url(#skinA)"/>
<path d="M975 590 C976 600 977 612 978 625 C980 645 980 665 977 688 C974 705 968 715 968 732 C967 762 966 800 966 829 C963 842 958 852 957 862 L990 862 C990 850 989 838 989 829 C993 800 999 782 1003 764 C1007 742 1012 715 1012 692 C1012 675 1013 660 1016 645 C1019 630 1022 618 1024 606Z" fill="url(#skinL)"/>
<path d="M 1120 590 C 1119 600 1118 612 1117 625 C 1115 645 1115 665 1118 688 C 1121 705 1127 715 1127 732 C 1128 762 1129 800 1129 829 C 1132 842 1137 852 1138 862 L 1105 862 C 1105 850 1106 838 1106 829 C 1102 800 1096 782 1092 764 C 1088 742 1083 715 1083 692 C 1083 675 1082 660 1079 645 C 1076 630 1073 618 1071 606 Z" fill="url(#skinL)"/>

<path d="M993 822 C998 835 997 855 994 872 C992 884 988 892 975 894 C962 895 954 890 953 880 C953 870 958 864 966 866 C975 866 985 858 990 846Z" fill="#0e0e0e"/>
<path d="M 1102 822 C 1097 835 1098 855 1101 872 C 1103 884 1107 892 1120 894 C 1133 895 1141 890 1142 880 C 1142 870 1137 864 1129 866 C 1120 866 1110 858 1105 846 Z" fill="#0e0e0e"/>
<path d="M1046 204 C1032 204 1020 210 1013 228 C1007 245 1006 265 1006 282 C1007 295 1009 302 1014 304 L1028 300 L1064 300 L1085 305 C1091 298 1093 285 1092 270 C1091 250 1088 232 1078 218 C1070 208 1058 204 1046 204Z" fill="url(#hairG)"/>
<path d="M1026 282 C1030 292 1036 298 1046 298 C1054 298 1060 292 1064 284 L1065 312 L1026 312Z" fill="#b89078"/>
<path d="M1040 227 C1028 228 1019 238 1018.5 255 C1018 270 1022 284 1032 292 C1038 297 1044 298 1050 296 C1058 292 1064 284 1067 272 C1069 258 1066 240 1060 232 C1054 228 1047 226 1040 227Z" fill="url(#faceG)"/>
<path d="M1022 214 C1040 212 1056 222 1063 238 C1068 255 1068 275 1066 292 C1070 298 1078 303 1085 305 C1091 295 1093 280 1092 262 C1090 240 1084 222 1070 212 C1058 204 1034 204 1022 214Z" fill="#543e30"/>
<path d="M1030 207 C1045 205 1062 211 1072 223 C1060 215 1045 211 1030 213Z" fill="#7a604c"/>
<path d="M1025 249 Q1033 244 1041 248 M1051 248 Q1058 244 1064 248" stroke="#3a2a22" stroke-width="2.4" fill="none"/>
<ellipse cx="1033" cy="253.5" rx="5" ry="2.3" fill="#3a2c28"/><ellipse cx="1057" cy="253.5" rx="5" ry="2.3" fill="#3a2c28"/>
<path d="M1046 257 L1044 270 L1049 271" stroke="#c09880" stroke-width="1.2" fill="none"/>
<path d="M1038 279 Q1047 276 1056 279 Q1047 284 1038 279Z" fill="#c98474"/>
<path d="M1011 303 C1030 299 1065 299 1084 303 L1086 312 C1089 316 1091 318 1092 320 C1098 335 1106 355 1106 375 C1104 400 1099 420 1097 442 L1099 453 C1108 480 1120 515 1128 545 C1133 560 1139 570 1140 577 C1120 596 1080 608 1041 608 C1010 607 988 598 966 590 C966 575 970 558 976 540 C984 512 996 480 1002 453 L1002 442 C998 420 992 400 991 375 C990 355 992 335 996 320 C998 317 1003 314 1008 311Z" fill="url(#dressG)"/>
<ellipse cx="1022" cy="385" rx="20" ry="22" fill="#242222" opacity="0.55" filter="url(#soft)"/>
<ellipse cx="1074" cy="385" rx="20" ry="22" fill="#242222" opacity="0.55" filter="url(#soft)"/>
<path d="M1002 442 L1097 442 L1099 453 L1002 453Z" fill="#121212"/>
<path d="M1011 303 C1030 298 1065 298 1084 303 L1085 312 C1065 307 1030 307 1012 312Z" fill="#1c1c1c"/>
<path d="M1044 314 C1042 360 1038 400 1030 430 M1058 314 C1058 350 1060 400 1056 440" stroke="#202020" stroke-width="2" fill="none"/>
<path d="M1072 450 C1080 445 1090 448 1094 455 C1098 465 1096 478 1090 483 C1085 475 1080 468 1074 462Z" fill="#1e1e1e"/>
<path d="M1074 455 C1082 462 1086 472 1088 480 M1080 450 C1088 456 1092 466 1092 474" stroke="#0c0c0c" stroke-width="1.5" fill="none"/>
<path d="M1000 520 C995 545 990 570 985 592 M1030 470 C1028 520 1024 570 1020 600 M1060 470 C1062 520 1068 570 1070 604 M1095 490 C1105 530 1115 560 1122 585" stroke="#1e1e1e" stroke-width="3" fill="none" opacity="0.8"/>
</svg>
</div>
<div class="a" style="left:617px;top:149px;width:15px;height:900px;background:#282828"></div>
<div class="a" style="left:618px;top:571px;width:3px;height:3px;background:#5a5a5a"></div>
<div class="a" style="left:618px;top:577px;width:3px;height:3px;background:#5a5a5a"></div>
<div class="a" style="left:618px;top:583px;width:3px;height:3px;background:#5a5a5a"></div>
<div class="a" style="left:618px;top:589px;width:3px;height:3px;background:#5a5a5a"></div>
<div class="a" style="left:618px;top:595px;width:3px;height:3px;background:#5a5a5a"></div>
<div class="a" style="left:618px;top:601px;width:3px;height:3px;background:#5a5a5a"></div>
<div class="a" style="left:618px;top:607px;width:3px;height:3px;background:#5a5a5a"></div>
<div class="a" style="left:618px;top:613px;width:3px;height:3px;background:#5a5a5a"></div>
<div class="a" style="left:618px;top:619px;width:3px;height:3px;background:#5a5a5a"></div>
<div class="a" style="left:618px;top:625px;width:3px;height:3px;background:#5a5a5a"></div>
<div class="a" style="left:1557px;top:571px;width:3px;height:3px;background:#5a5a5a"></div>
<div class="a" style="left:1557px;top:577px;width:3px;height:3px;background:#5a5a5a"></div>
<div class="a" style="left:1557px;top:583px;width:3px;height:3px;background:#5a5a5a"></div>
<div class="a" style="left:1557px;top:589px;width:3px;height:3px;background:#5a5a5a"></div>
<div class="a" style="left:1557px;top:595px;width:3px;height:3px;background:#5a5a5a"></div>
<div class="a" style="left:1557px;top:601px;width:3px;height:3px;background:#5a5a5a"></div>
<div class="a" style="left:1557px;top:607px;width:3px;height:3px;background:#5a5a5a"></div>
<div class="a" style="left:1557px;top:613px;width:3px;height:3px;background:#5a5a5a"></div>
<div class="a" style="left:1557px;top:619px;width:3px;height:3px;background:#5a5a5a"></div>
<div class="a" style="left:1557px;top:625px;width:3px;height:3px;background:#5a5a5a"></div>
<div class="a" style="left:632px;top:905px;width:914px;height:13px;background:#2d2d30"></div>
<div class="a" style="left:622px;top:918px;width:934px;height:7px;background:#262523"></div>
<div class="a" style="left:622px;top:925px;width:934px;height:124px;background:#282828;border-left:1px solid #5a5a5a;border-right:1px solid #5a5a5a"></div>
<div class="a" style="left:622px;top:925px;width:934px;height:20px;background:#82bd14"></div>
<div class="t" style="left:798.0px;top:928.5px;width:600px;text-align:center;font-size:11.8px;line-height:14px;color:#111;font-weight:bold">Animation Player : CC3_Base_Plus - Current Frame</div>
<svg class="a" style="left:1528px;top:929px;" width="13" height="13" viewBox="0 0 13 13" fill="none" stroke="#d0d0d0" stroke-width="1.5"><circle cx="6.5" cy="6.5" r="5.7" stroke="#1c3a00" stroke-width="1.1"/><path d="M4 4l5 5M9 4l-5 5" stroke="#1c3a00" stroke-width="1.1"/></svg>
<div class="a" style="left:1062px;top:921px;width:3px;height:2px;background:#666"></div>
<div class="a" style="left:1068px;top:921px;width:3px;height:2px;background:#666"></div>
<div class="a" style="left:1074px;top:921px;width:3px;height:2px;background:#666"></div>
<div class="a" style="left:1080px;top:921px;width:3px;height:2px;background:#666"></div>
<div class="a" style="left:1086px;top:921px;width:3px;height:2px;background:#666"></div>
<div class="a" style="left:1092px;top:921px;width:3px;height:2px;background:#666"></div>
<div class="a" style="left:1098px;top:921px;width:3px;height:2px;background:#666"></div>
<div class="a" style="left:1104px;top:921px;width:3px;height:2px;background:#666"></div>
<div class="a" style="left:1110px;top:921px;width:3px;height:2px;background:#666"></div>
<div class="a" style="left:1116px;top:921px;width:3px;height:2px;background:#666"></div>
<svg class="a" style="left:643px;top:968px;" width="14" height="14" viewBox="0 0 14 14" fill="none" stroke="#d0d0d0" stroke-width="1.5"><circle cx="7" cy="7" r="6" stroke="#5a5a5a" stroke-width="1.3"/></svg>
<div class="a" style="left:656px;top:975px;width:697px;height:1px;background:#4a4a4a"></div>
<div class="a" style="left:1368px;top:957px;width:50px;height:25px;border:1px solid #3e3e3e"></div>
<div class="a" style="left:1403px;top:957px;width:1px;height:25px;background:#3e3e3e"></div>
<svg class="a" style="left:1405px;top:960px;" width="11" height="19" viewBox="0 0 11 19" fill="none" stroke="#d0d0d0" stroke-width="1.5"><path d="M2 7l3.5-4 3.5 4z M2 12l3.5 4 3.5-4z" fill="#4a4a4a" stroke="none"/></svg>
<svg class="a" style="left:1438px;top:959px;" width="16" height="24" viewBox="0 0 16 24" fill="none" stroke="#d0d0d0" stroke-width="1.5"><path d="M5 1h2v4h-2z M6 5c-2 0-2 4-2 7l1 9h2l1-9c0-3 0-7-2-7 M9 16h5v5h-5z" stroke="#444" stroke-width="1.1"/></svg>
<svg class="a" style="left:1473px;top:960px;" width="23" height="18" viewBox="0 0 23 18" fill="none" stroke="#d0d0d0" stroke-width="1.5"><path d="M11.5 1l6 2.5-6 2.5-6-2.5z M5.5 3.5v6l6 2.5v-6z M17.5 3.5v6l-6 2.5" fill="#d8d8d8" stroke="#d8d8d8" stroke-width="1"/><path d="M3 9c-3 3 0 6 6 7 M20 9c3 3 0 6-6 7 M8 14l2 2-2 2" stroke="#d8d8d8" stroke-width="1.2"/></svg>
<svg class="a" style="left:1518px;top:962px;" width="19" height="15" viewBox="0 0 19 15" fill="none" stroke="#d0d0d0" stroke-width="1.5"><path d="M1 1h11v8h-11z" stroke="#d8d8d8" stroke-width="1.3"/><rect x="7" y="5.5" width="11" height="9" fill="#d8d8d8" stroke="none"/></svg>
<svg class="a" style="left:766px;top:1013px;" width="13" height="13" viewBox="0 0 13 13" fill="none" stroke="#d0d0d0" stroke-width="1.5"><path d="M1 1v11" stroke="#4e4e4e" stroke-width="1.5"/><path d="M12 1v11L3 6.5z" fill="#4e4e4e" stroke="none"/></svg>
<svg class="a" style="left:799px;top:1013px;" width="15" height="13" viewBox="0 0 15 13" fill="none" stroke="#d0d0d0" stroke-width="1.5"><path d="M7 1v11L1 6.5z M14 1v11L8 6.5z" fill="#4e4e4e" stroke="none"/></svg>
<svg class="a" style="left:833px;top:1013px;" width="11" height="13" viewBox="0 0 11 13" fill="none" stroke="#d0d0d0" stroke-width="1.5"><path d="M1 1v11l9-5.5z" fill="#4e4e4e" stroke="none"/></svg>
<svg class="a" style="left:864px;top:1013px;" width="15" height="13" viewBox="0 0 15 13" fill="none" stroke="#d0d0d0" stroke-width="1.5"><path d="M1 1v11l6-5.5z M8 1v11l6-5.5z" fill="#4e4e4e" stroke="none"/></svg>
<svg class="a" style="left:898px;top:1013px;" width="13" height="13" viewBox="0 0 13 13" fill="none" stroke="#d0d0d0" stroke-width="1.5"><path d="M12 1v11" stroke="#4e4e4e" stroke-width="1.5"/><path d="M1 1v11l9-5.5z" fill="#4e4e4e" stroke="none"/></svg>
<svg class="a" style="left:929px;top:1012px;" width="18" height="15" viewBox="0 0 18 15" fill="none" stroke="#d0d0d0" stroke-width="1.5"><path d="M2 10v-6h12 M16 5v6h-12 M12 2l2.5 2-2.5 2 M6 13l-2.5-2 2.5-2" stroke="#4e4e4e" stroke-width="1.4"/></svg>
<svg class="a" style="left:954px;top:1021px;" width="7" height="5" viewBox="0 0 7 5" fill="none" stroke="#d0d0d0" stroke-width="1.5"><path d="M0 0h6l-3 4z" fill="#bdbdbd" stroke="none"/></svg>
<svg class="a" style="left:973px;top:1012px;" width="18" height="15" viewBox="0 0 18 15" fill="none" stroke="#d0d0d0" stroke-width="1.5"><path d="M1.5 1.5h15v9h-9l-3 3v-3h-3z" stroke="#4e4e4e" stroke-width="1.2"/><path d="M5 6h1 M8.5 6h1 M12 6h1" stroke="#4e4e4e" stroke-width="1.4"/></svg>
<div class="a" style="left:1001px;top:1008px;width:79px;height:24px;border:1px solid #3a3a3a"></div>
<div class="t" style="left:840.5px;top:1013.0px;width:400px;text-align:center;font-size:12.3px;line-height:14px;color:#4a4a4a">Realtime</div>
<div class="a" style="left:1091px;top:1006px;width:1px;height:28px;background:#3a3a3a"></div>
<div class="a" style="left:1102px;top:1008px;width:62px;height:24px;border:1px solid #3a3a3a"></div>
<div class="t" style="left:1114px;top:1013.0px;font-size:12.3px;line-height:14px;color:#4a4a4a">1x</div>
<svg class="a" style="left:1147px;top:1016px;" width="11" height="7" viewBox="0 0 11 7" fill="none" stroke="#d0d0d0" stroke-width="1.5"><path d="M0 0h10l-5 6z" fill="#444" stroke="none"/></svg>
<div class="a" style="left:1170px;top:1007px;width:123px;height:25px;border:1px solid #5a5a5a"></div>
<svg class="a" style="left:1190px;top:1010px;" width="19" height="19" viewBox="0 0 19 19" fill="none" stroke="#d0d0d0" stroke-width="1.5"><path d="M12 2h2v4h-2z M3 17l6-7 2 2h4 M6 9l4-3 2 2 M8 11l-3 4h4" stroke="#d8d8d8" stroke-width="1.2"/></svg>
<div class="t" style="left:1213px;top:1012.5px;font-size:12.3px;line-height:14px;color:#dcdcdc">Motion</div>
<svg class="a" style="left:1282px;top:1022px;" width="8" height="5" viewBox="0 0 8 5" fill="none" stroke="#d0d0d0" stroke-width="1.5"><path d="M0 0h7l-3.5 4z" fill="#d8d8d8" stroke="none"/></svg>
<div class="a" style="left:1298px;top:1007px;width:123px;height:25px;border:1px solid #5a5a5a"></div>
<svg class="a" style="left:1320px;top:1010px;" width="15" height="19" viewBox="0 0 15 19" fill="none" stroke="#d0d0d0" stroke-width="1.5"><path d="M1 4h13 M5 4v-2h5v2 M3 4v13h9v-13 M6 7v8 M9 7v8" stroke="#d8d8d8" stroke-width="1.2"/></svg>
<div class="t" style="left:1341px;top:1012.5px;font-size:12.3px;line-height:14px;color:#dcdcdc">Remove</div>
<svg class="a" style="left:1410px;top:1022px;" width="8" height="5" viewBox="0 0 8 5" fill="none" stroke="#d0d0d0" stroke-width="1.5"><path d="M0 0h7l-3.5 4z" fill="#d8d8d8" stroke="none"/></svg>
<div class="a" style="left:1561px;top:149px;width:359px;height:900px;background:#282828"></div>
<div class="a" style="left:1561px;top:149px;width:359px;height:20px;background:#82bd14"></div>
<div class="t" style="left:1550.0px;top:152.5px;width:400px;text-align:center;font-size:11.8px;line-height:14px;color:#111;font-weight:bold">Modify</div>
<svg class="a" style="left:1891px;top:153px;" width="13" height="13" viewBox="0 0 13 13" fill="none" stroke="#d0d0d0" stroke-width="1.5"><circle cx="6.5" cy="6.5" r="5.7" stroke="#1c3a00" stroke-width="1.1"/><path d="M4 4l5 5M9 4l-5 5" stroke="#1c3a00" stroke-width="1.1"/></svg>
<div class="a" style="left:1561px;top:169px;width:359px;height:39px;background:#000"></div>
<div class="a" style="left:1637px;top:169px;width:40px;height:40px;background:#282828;border-left:1px solid #555;border-right:1px solid #555"></div>
<div class="a" style="left:1561px;top:208px;width:77px;height:1px;background:#555"></div>
<div class="a" style="left:1676px;top:208px;width:244px;height:1px;background:#555"></div>
<div class="a" style="left:1561px;top:208px;width:1px;height:841px;background:#555"></div>
<svg class="a" style="left:1566px;top:176px;" width="28" height="26" viewBox="0 0 28 26" fill="none" stroke="#d0d0d0" stroke-width="1.5"><path d="M2 4h24 M2 11h24 M2 18h24" stroke="#e0e0e0" stroke-width="1.4"/><circle cx="11" cy="4" r="3" fill="#000" stroke="#e0e0e0" stroke-width="1.4"/><circle cx="18" cy="11" r="3" fill="#000" stroke="#e0e0e0" stroke-width="1.4"/><circle cx="7" cy="18" r="3" fill="#000" stroke="#e0e0e0" stroke-width="1.4"/></svg>
<svg class="a" style="left:1606px;top:176px;" width="24" height="26" viewBox="0 0 24 26" fill="none" stroke="#d0d0d0" stroke-width="1.5"><path d="M14 2h3v8h-3 M5 24l8-10 4 4h5 M9 13l5-4 4 4 M12 15l-4 5h6" stroke="#e0e0e0" stroke-width="1.5"/></svg>
<svg class="a" style="left:1641px;top:176px;" width="32" height="24" viewBox="0 0 32 24" fill="none" stroke="#d0d0d0" stroke-width="1.5"><path d="M1 11h8 M6 8l3 3-3 3 M31 11h-8 M26 8l-3 3 3 3 M11 2h10 M11 21h10 M12 2c3 4 3 15 0 19 M20 2c-3 4-3 15 0 19" stroke="#8dc63f" stroke-width="1.8"/></svg>
<svg class="a" style="left:1682px;top:176px;" width="28" height="26" viewBox="0 0 28 26" fill="none" stroke="#d0d0d0" stroke-width="1.5"><path d="M12 3c-6 0-10 4-10 9 0 5 4 9 9 9 2 0 2-2 1-3-1-2 0-3 2-3h3c3 0 5-2 5-5 0-4-4-7-10-7z" stroke="#e0e0e0" stroke-width="1.5"/><circle cx="7" cy="11" r="1.6" fill="#e0e0e0"/><circle cx="10" cy="7" r="1.6" fill="#e0e0e0"/><circle cx="15" cy="7" r="1.6" fill="#e0e0e0"/><path d="M14 21l8-10h4l-6 10h6" stroke="#e0e0e0" stroke-width="1.5"/></svg>
<svg class="a" style="left:1723px;top:178px" width="22" height="22" viewBox="0 0 6 6" shape-rendering="crispEdges"><rect width="6" height="6" fill="#0a0a0a"/><rect x="0" y="0" width="1" height="1" fill="#e4e4e4"/><rect x="2" y="0" width="1" height="1" fill="#e4e4e4"/><rect x="4" y="0" width="1" height="1" fill="#e4e4e4"/><rect x="1" y="1" width="1" height="1" fill="#e4e4e4"/><rect x="3" y="1" width="1" height="1" fill="#e4e4e4"/><rect x="5" y="1" width="1" height="1" fill="#e4e4e4"/><rect x="0" y="2" width="1" height="1" fill="#e4e4e4"/><rect x="2" y="2" width="1" height="1" fill="#e4e4e4"/><rect x="4" y="2" width="1" height="1" fill="#e4e4e4"/><rect x="1" y="3" width="1" height="1" fill="#e4e4e4"/><rect x="3" y="3" width="1" height="1" fill="#e4e4e4"/><rect x="5" y="3" width="1" height="1" fill="#e4e4e4"/><rect x="0" y="4" width="1" height="1" fill="#e4e4e4"/><rect x="2" y="4" width="1" height="1" fill="#e4e4e4"/><rect x="4" y="4" width="1" height="1" fill="#e4e4e4"/><rect x="1" y="5" width="1" height="1" fill="#e4e4e4"/><rect x="3" y="5" width="1" height="1" fill="#e4e4e4"/><rect x="5" y="5" width="1" height="1" fill="#e4e4e4"/></svg>
<svg class="a" style="left:1759px;top:176px;" width="26" height="26" viewBox="0 0 26 26" fill="none" stroke="#d0d0d0" stroke-width="1.5"><ellipse cx="13" cy="13" rx="11.5" ry="4.5" stroke="#e0e0e0" stroke-width="1.4"/><ellipse cx="13" cy="13" rx="11.5" ry="4.5" transform="rotate(60 13 13)" stroke="#e0e0e0" stroke-width="1.4"/><ellipse cx="13" cy="13" rx="11.5" ry="4.5" transform="rotate(-60 13 13)" stroke="#e0e0e0" stroke-width="1.4"/><circle cx="13" cy="13" r="2.2" fill="#e0e0e0"/></svg>
<div class="a" style="left:1577px;top:224px;width:25px;height:25px;border:1px solid #4a4a4a"></div>
<svg class="a" style="left:1580px;top:227px;" width="19" height="19" viewBox="0 0 19 19" fill="none" stroke="#d0d0d0" stroke-width="1.5"><path d="M9.5 2v15 M2 9.5h15" stroke="#e0e0e0" stroke-width="1.3"/></svg>
<div class="a" style="left:1612px;top:224px;width:25px;height:25px;border:1px solid #4a4a4a"></div>
<svg class="a" style="left:1614px;top:226px;" width="21" height="21" viewBox="0 0 21 21" fill="none" stroke="#d0d0d0" stroke-width="1.5"><path d="M9 3c-4 0-4 5-1 6-3 1-5 4-5 9h6 M10 12h9 M10 16h9" stroke="#d0d0d0" stroke-width="1.1"/><circle cx="15" cy="12" r="1.5" stroke="#d0d0d0"/><circle cx="13" cy="16" r="1.5" stroke="#d0d0d0"/></svg>
<div class="a" style="left:1647px;top:224px;width:95px;height:25px;border:1px solid #4a4a4a"></div>
<div class="t" style="left:1658px;top:229.5px;font-size:12.3px;line-height:14px;color:#dcdcdc">All</div>
<svg class="a" style="left:1724px;top:233px;" width="12" height="7" viewBox="0 0 12 7" fill="none" stroke="#d0d0d0" stroke-width="1.5"><path d="M0 0h11l-5.5 6z" fill="#e0e0e0" stroke="none"/></svg>
<div class="a" style="left:1577px;top:259px;width:165px;height:775px;border:1px solid #4a4a4a"></div>
<div class="a" style="left:1577px;top:983px;width:165px;height:1px;background:#4a4a4a"></div>
<div class="a" style="left:1729px;top:270px;width:7px;height:428px;background:#555;border-radius:3px"></div>
<svg class="a" style="left:1602px;top:264px;" width="14" height="14" viewBox="0 0 14 14" fill="none" stroke="#d0d0d0" stroke-width="1.5"><circle cx="7" cy="7" r="5.5" fill="#d8d8d8" stroke="none"/></svg>
<div class="t" style="left:1623px;top:265.0px;font-size:12.3px;line-height:14px;color:#dcdcdc">Currently Used</div>
<svg class="a" style="left:1601px;top:289px;" width="16" height="14" viewBox="0 0 16 14" fill="none" stroke="#d0d0d0" stroke-width="1.5"><path d="M8 13C3 9 1 7 1 4.5 1 2.5 2.5 1 4.5 1 6 1 7.2 2 8 3 8.8 2 10 1 11.5 1 13.5 1 15 2.5 15 4.5 15 7 13 9 8 13z" fill="#d8d8d8" stroke="none"/></svg>
<div class="t" style="left:1623px;top:289.5px;font-size:12.3px;line-height:14px;color:#dcdcdc">Favorites</div>
<div class="a" style="left:1578px;top:308px;width:146px;height:25px;background:#000"></div>
<div class="a" style="left:1578px;top:308px;width:146px;height:674px;overflow:hidden">
<svg class="a" style="left:6px;top:9.5px;" width="8" height="8" viewBox="0 0 8 8" fill="none" stroke="#d0d0d0" stroke-width="1.5"><path d="M7 0.5V7H0.5z" fill="#bdbdbd" stroke="none"/></svg>
<svg class="a" style="left:31px;top:0.5px;" width="20" height="20" viewBox="0 0 20 20" fill="none" stroke="#d0d0d0" stroke-width="1.5"><rect x="0.5" y="3.8" width="14.5" height="14.3" stroke="#d8d8d8" stroke-width="1.1"/><path d="M2.5 10.3L7 15L17.5 1.5" stroke="#d8d8d8" stroke-width="1.2"/></svg>
<div class="t" style="left:60px;top:5.5px;font-size:12.3px;line-height:14px;color:#dcdcdc">Actor</div>
<svg class="a" style="left:26px;top:34.5px;" width="8" height="8" viewBox="0 0 8 8" fill="none" stroke="#d0d0d0" stroke-width="1.5"><path d="M7 0.5V7H0.5z" fill="#bdbdbd" stroke="none"/></svg>
<svg class="a" style="left:51px;top:25.5px;" width="20" height="20" viewBox="0 0 20 20" fill="none" stroke="#d0d0d0" stroke-width="1.5"><rect x="0.5" y="3.8" width="14.5" height="14.3" stroke="#d8d8d8" stroke-width="1.1"/><path d="M2.5 10.3L7 15L17.5 1.5" stroke="#d8d8d8" stroke-width="1.2"/></svg>
<div class="t" style="left:80px;top:30.5px;font-size:12.3px;line-height:14px;color:#dcdcdc">Body</div>
<svg class="a" style="left:48px;top:57.5px;" width="7" height="10" viewBox="0 0 7 10" fill="none" stroke="#d0d0d0" stroke-width="1.5"><path d="M0.5 0.5L6 5L0.5 9.5z" fill="#e0e0e0" stroke="none"/></svg>
<svg class="a" style="left:71px;top:50.5px;" width="20" height="20" viewBox="0 0 20 20" fill="none" stroke="#d0d0d0" stroke-width="1.5"><rect x="0.5" y="3.8" width="14.5" height="14.3" stroke="#d8d8d8" stroke-width="1.1"/><path d="M2.5 10.3L7 15L17.5 1.5" stroke="#d8d8d8" stroke-width="1.2"/></svg>
<div class="t" style="left:100px;top:55.5px;font-size:12.3px;line-height:14px;color:#dcdcdc">Full Body</div>
<svg class="a" style="left:48px;top:82.5px;" width="7" height="10" viewBox="0 0 7 10" fill="none" stroke="#d0d0d0" stroke-width="1.5"><path d="M0.5 0.5L6 5L0.5 9.5z" fill="#e0e0e0" stroke="none"/></svg>
<svg class="a" style="left:71px;top:75.5px;" width="20" height="20" viewBox="0 0 20 20" fill="none" stroke="#d0d0d0" stroke-width="1.5"><rect x="0.5" y="3.8" width="14.5" height="14.3" stroke="#d8d8d8" stroke-width="1.1"/><path d="M2.5 10.3L7 15L17.5 1.5" stroke="#d8d8d8" stroke-width="1.2"/></svg>
<div class="t" style="left:100px;top:80.5px;font-size:12.3px;line-height:14px;color:#dcdcdc">Shoulder</div>
<svg class="a" style="left:48px;top:107.5px;" width="7" height="10" viewBox="0 0 7 10" fill="none" stroke="#d0d0d0" stroke-width="1.5"><path d="M0.5 0.5L6 5L0.5 9.5z" fill="#e0e0e0" stroke="none"/></svg>
<svg class="a" style="left:71px;top:100.5px;" width="20" height="20" viewBox="0 0 20 20" fill="none" stroke="#d0d0d0" stroke-width="1.5"><rect x="0.5" y="3.8" width="14.5" height="14.3" stroke="#d8d8d8" stroke-width="1.1"/><path d="M2.5 10.3L7 15L17.5 1.5" stroke="#d8d8d8" stroke-width="1.2"/></svg>
<div class="t" style="left:100px;top:105.5px;font-size:12.3px;line-height:14px;color:#dcdcdc">Arm</div>
<svg class="a" style="left:48px;top:132.5px;" width="7" height="10" viewBox="0 0 7 10" fill="none" stroke="#d0d0d0" stroke-width="1.5"><path d="M0.5 0.5L6 5L0.5 9.5z" fill="#e0e0e0" stroke="none"/></svg>
<svg class="a" style="left:71px;top:125.5px;" width="20" height="20" viewBox="0 0 20 20" fill="none" stroke="#d0d0d0" stroke-width="1.5"><rect x="0.5" y="3.8" width="14.5" height="14.3" stroke="#d8d8d8" stroke-width="1.1"/><path d="M2.5 10.3L7 15L17.5 1.5" stroke="#d8d8d8" stroke-width="1.2"/></svg>
<div class="t" style="left:100px;top:130.5px;font-size:12.3px;line-height:14px;color:#dcdcdc">Hand</div>
<svg class="a" style="left:48px;top:157.5px;" width="7" height="10" viewBox="0 0 7 10" fill="none" stroke="#d0d0d0" stroke-width="1.5"><path d="M0.5 0.5L6 5L0.5 9.5z" fill="#e0e0e0" stroke="none"/></svg>
<svg class="a" style="left:71px;top:150.5px;" width="20" height="20" viewBox="0 0 20 20" fill="none" stroke="#d0d0d0" stroke-width="1.5"><rect x="0.5" y="3.8" width="14.5" height="14.3" stroke="#d8d8d8" stroke-width="1.1"/><path d="M2.5 10.3L7 15L17.5 1.5" stroke="#d8d8d8" stroke-width="1.2"/></svg>
<div class="t" style="left:100px;top:155.5px;font-size:12.3px;line-height:14px;color:#dcdcdc">Chest</div>
<svg class="a" style="left:71px;top:175.5px;" width="20" height="20" viewBox="0 0 20 20" fill="none" stroke="#d0d0d0" stroke-width="1.5"><rect x="0.5" y="3.8" width="14.5" height="14.3" stroke="#d8d8d8" stroke-width="1.1"/><path d="M2.5 10.3L7 15L17.5 1.5" stroke="#d8d8d8" stroke-width="1.2"/></svg>
<div class="t" style="left:100px;top:180.5px;font-size:12.3px;line-height:14px;color:#dcdcdc">Back</div>
<svg class="a" style="left:48px;top:207.5px;" width="7" height="10" viewBox="0 0 7 10" fill="none" stroke="#d0d0d0" stroke-width="1.5"><path d="M0.5 0.5L6 5L0.5 9.5z" fill="#e0e0e0" stroke="none"/></svg>
<svg class="a" style="left:71px;top:200.5px;" width="20" height="20" viewBox="0 0 20 20" fill="none" stroke="#d0d0d0" stroke-width="1.5"><rect x="0.5" y="3.8" width="14.5" height="14.3" stroke="#d8d8d8" stroke-width="1.1"/><path d="M2.5 10.3L7 15L17.5 1.5" stroke="#d8d8d8" stroke-width="1.2"/></svg>
<div class="t" style="left:100px;top:205.5px;font-size:12.3px;line-height:14px;color:#dcdcdc">Waist</div>
<svg class="a" style="left:48px;top:232.5px;" width="7" height="10" viewBox="0 0 7 10" fill="none" stroke="#d0d0d0" stroke-width="1.5"><path d="M0.5 0.5L6 5L0.5 9.5z" fill="#e0e0e0" stroke="none"/></svg>
<svg class="a" style="left:71px;top:225.5px;" width="20" height="20" viewBox="0 0 20 20" fill="none" stroke="#d0d0d0" stroke-width="1.5"><rect x="0.5" y="3.8" width="14.5" height="14.3" stroke="#d8d8d8" stroke-width="1.1"/><path d="M2.5 10.3L7 15L17.5 1.5" stroke="#d8d8d8" stroke-width="1.2"/></svg>
<div class="t" style="left:100px;top:230.5px;font-size:12.3px;line-height:14px;color:#dcdcdc">Hip</div>
<svg class="a" style="left:48px;top:257.5px;" width="7" height="10" viewBox="0 0 7 10" fill="none" stroke="#d0d0d0" stroke-width="1.5"><path d="M0.5 0.5L6 5L0.5 9.5z" fill="#e0e0e0" stroke="none"/></svg>
<svg class="a" style="left:71px;top:250.5px;" width="20" height="20" viewBox="0 0 20 20" fill="none" stroke="#d0d0d0" stroke-width="1.5"><rect x="0.5" y="3.8" width="14.5" height="14.3" stroke="#d8d8d8" stroke-width="1.1"/><path d="M2.5 10.3L7 15L17.5 1.5" stroke="#d8d8d8" stroke-width="1.2"/></svg>
<div class="t" style="left:100px;top:255.5px;font-size:12.3px;line-height:14px;color:#dcdcdc">Glute</div>
<svg class="a" style="left:48px;top:282.5px;" width="7" height="10" viewBox="0 0 7 10" fill="none" stroke="#d0d0d0" stroke-width="1.5"><path d="M0.5 0.5L6 5L0.5 9.5z" fill="#e0e0e0" stroke="none"/></svg>
<svg class="a" style="left:71px;top:275.5px;" width="20" height="20" viewBox="0 0 20 20" fill="none" stroke="#d0d0d0" stroke-width="1.5"><rect x="0.5" y="3.8" width="14.5" height="14.3" stroke="#d8d8d8" stroke-width="1.1"/><path d="M2.5 10.3L7 15L17.5 1.5" stroke="#d8d8d8" stroke-width="1.2"/></svg>
<div class="t" style="left:100px;top:280.5px;font-size:12.3px;line-height:14px;color:#dcdcdc">Leg</div>
<svg class="a" style="left:48px;top:307.5px;" width="7" height="10" viewBox="0 0 7 10" fill="none" stroke="#d0d0d0" stroke-width="1.5"><path d="M0.5 0.5L6 5L0.5 9.5z" fill="#e0e0e0" stroke="none"/></svg>
<svg class="a" style="left:71px;top:300.5px;" width="20" height="20" viewBox="0 0 20 20" fill="none" stroke="#d0d0d0" stroke-width="1.5"><rect x="0.5" y="3.8" width="14.5" height="14.3" stroke="#d8d8d8" stroke-width="1.1"/><path d="M2.5 10.3L7 15L17.5 1.5" stroke="#d8d8d8" stroke-width="1.2"/></svg>
<div class="t" style="left:100px;top:305.5px;font-size:12.3px;line-height:14px;color:#dcdcdc">Foot</div>
<svg class="a" style="left:71px;top:325.5px;" width="20" height="20" viewBox="0 0 20 20" fill="none" stroke="#d0d0d0" stroke-width="1.5"><rect x="0.5" y="3.8" width="14.5" height="14.3" stroke="#d8d8d8" stroke-width="1.1"/><path d="M2.5 10.3L7 15L17.5 1.5" stroke="#d8d8d8" stroke-width="1.2"/></svg>
<div class="t" style="left:100px;top:330.5px;font-size:12.3px;line-height:14px;color:#dcdcdc">Pose Correction</div>
<svg class="a" style="left:71px;top:350.5px;" width="20" height="20" viewBox="0 0 20 20" fill="none" stroke="#d0d0d0" stroke-width="1.5"><rect x="0.5" y="3.8" width="14.5" height="14.3" stroke="#d8d8d8" stroke-width="1.1"/><path d="M2.5 10.3L7 15L17.5 1.5" stroke="#d8d8d8" stroke-width="1.2"/></svg>
<div class="t" style="left:100px;top:355.5px;font-size:12.3px;line-height:14px;color:#dcdcdc">Base Model</div>
<svg class="a" style="left:26px;top:384.5px;" width="8" height="8" viewBox="0 0 8 8" fill="none" stroke="#d0d0d0" stroke-width="1.5"><path d="M7 0.5V7H0.5z" fill="#bdbdbd" stroke="none"/></svg>
<svg class="a" style="left:51px;top:375.5px;" width="20" height="20" viewBox="0 0 20 20" fill="none" stroke="#d0d0d0" stroke-width="1.5"><rect x="0.5" y="3.8" width="14.5" height="14.3" stroke="#d8d8d8" stroke-width="1.1"/><path d="M2.5 10.3L7 15L17.5 1.5" stroke="#d8d8d8" stroke-width="1.2"/></svg>
<div class="t" style="left:80px;top:380.5px;font-size:12.3px;line-height:14px;color:#dcdcdc">Head</div>
<svg class="a" style="left:48px;top:407.5px;" width="7" height="10" viewBox="0 0 7 10" fill="none" stroke="#d0d0d0" stroke-width="1.5"><path d="M0.5 0.5L6 5L0.5 9.5z" fill="#e0e0e0" stroke="none"/></svg>
<svg class="a" style="left:71px;top:400.5px;" width="20" height="20" viewBox="0 0 20 20" fill="none" stroke="#d0d0d0" stroke-width="1.5"><rect x="0.5" y="3.8" width="14.5" height="14.3" stroke="#d8d8d8" stroke-width="1.1"/><path d="M2.5 10.3L7 15L17.5 1.5" stroke="#d8d8d8" stroke-width="1.2"/></svg>
<div class="t" style="left:100px;top:405.5px;font-size:12.3px;line-height:14px;color:#dcdcdc">Full Head</div>
<svg class="a" style="left:48px;top:432.5px;" width="7" height="10" viewBox="0 0 7 10" fill="none" stroke="#d0d0d0" stroke-width="1.5"><path d="M0.5 0.5L6 5L0.5 9.5z" fill="#e0e0e0" stroke="none"/></svg>
<svg class="a" style="left:71px;top:425.5px;" width="20" height="20" viewBox="0 0 20 20" fill="none" stroke="#d0d0d0" stroke-width="1.5"><rect x="0.5" y="3.8" width="14.5" height="14.3" stroke="#d8d8d8" stroke-width="1.1"/><path d="M2.5 10.3L7 15L17.5 1.5" stroke="#d8d8d8" stroke-width="1.2"/></svg>
<div class="t" style="left:100px;top:430.5px;font-size:12.3px;line-height:14px;color:#dcdcdc">Skull</div>
<svg class="a" style="left:48px;top:457.5px;" width="7" height="10" viewBox="0 0 7 10" fill="none" stroke="#d0d0d0" stroke-width="1.5"><path d="M0.5 0.5L6 5L0.5 9.5z" fill="#e0e0e0" stroke="none"/></svg>
<svg class="a" style="left:71px;top:450.5px;" width="20" height="20" viewBox="0 0 20 20" fill="none" stroke="#d0d0d0" stroke-width="1.5"><rect x="0.5" y="3.8" width="14.5" height="14.3" stroke="#d8d8d8" stroke-width="1.1"/><path d="M2.5 10.3L7 15L17.5 1.5" stroke="#d8d8d8" stroke-width="1.2"/></svg>
<div class="t" style="left:100px;top:455.5px;font-size:12.3px;line-height:14px;color:#dcdcdc">Forehead</div>
<svg class="a" style="left:48px;top:482.5px;" width="7" height="10" viewBox="0 0 7 10" fill="none" stroke="#d0d0d0" stroke-width="1.5"><path d="M0.5 0.5L6 5L0.5 9.5z" fill="#e0e0e0" stroke="none"/></svg>
<svg class="a" style="left:71px;top:475.5px;" width="20" height="20" viewBox="0 0 20 20" fill="none" stroke="#d0d0d0" stroke-width="1.5"><rect x="0.5" y="3.8" width="14.5" height="14.3" stroke="#d8d8d8" stroke-width="1.1"/><path d="M2.5 10.3L7 15L17.5 1.5" stroke="#d8d8d8" stroke-width="1.2"/></svg>
<div class="t" style="left:100px;top:480.5px;font-size:12.3px;line-height:14px;color:#dcdcdc">Brow</div>
<svg class="a" style="left:48px;top:507.5px;" width="7" height="10" viewBox="0 0 7 10" fill="none" stroke="#d0d0d0" stroke-width="1.5"><path d="M0.5 0.5L6 5L0.5 9.5z" fill="#e0e0e0" stroke="none"/></svg>
<svg class="a" style="left:71px;top:500.5px;" width="20" height="20" viewBox="0 0 20 20" fill="none" stroke="#d0d0d0" stroke-width="1.5"><rect x="0.5" y="3.8" width="14.5" height="14.3" stroke="#d8d8d8" stroke-width="1.1"/><path d="M2.5 10.3L7 15L17.5 1.5" stroke="#d8d8d8" stroke-width="1.2"/></svg>
<div class="t" style="left:100px;top:505.5px;font-size:12.3px;line-height:14px;color:#dcdcdc">Eye</div>
<svg class="a" style="left:48px;top:532.5px;" width="7" height="10" viewBox="0 0 7 10" fill="none" stroke="#d0d0d0" stroke-width="1.5"><path d="M0.5 0.5L6 5L0.5 9.5z" fill="#e0e0e0" stroke="none"/></svg>
<svg class="a" style="left:71px;top:525.5px;" width="20" height="20" viewBox="0 0 20 20" fill="none" stroke="#d0d0d0" stroke-width="1.5"><rect x="0.5" y="3.8" width="14.5" height="14.3" stroke="#d8d8d8" stroke-width="1.1"/><path d="M2.5 10.3L7 15L17.5 1.5" stroke="#d8d8d8" stroke-width="1.2"/></svg>
<div class="t" style="left:100px;top:530.5px;font-size:12.3px;line-height:14px;color:#dcdcdc">Ear</div>
<svg class="a" style="left:48px;top:557.5px;" width="7" height="10" viewBox="0 0 7 10" fill="none" stroke="#d0d0d0" stroke-width="1.5"><path d="M0.5 0.5L6 5L0.5 9.5z" fill="#e0e0e0" stroke="none"/></svg>
<svg class="a" style="left:71px;top:550.5px;" width="20" height="20" viewBox="0 0 20 20" fill="none" stroke="#d0d0d0" stroke-width="1.5"><rect x="0.5" y="3.8" width="14.5" height="14.3" stroke="#d8d8d8" stroke-width="1.1"/><path d="M2.5 10.3L7 15L17.5 1.5" stroke="#d8d8d8" stroke-width="1.2"/></svg>
<div class="t" style="left:100px;top:555.5px;font-size:12.3px;line-height:14px;color:#dcdcdc">Cheek</div>
<svg class="a" style="left:48px;top:582.5px;" width="7" height="10" viewBox="0 0 7 10" fill="none" stroke="#d0d0d0" stroke-width="1.5"><path d="M0.5 0.5L6 5L0.5 9.5z" fill="#e0e0e0" stroke="none"/></svg>
<svg class="a" style="left:71px;top:575.5px;" width="20" height="20" viewBox="0 0 20 20" fill="none" stroke="#d0d0d0" stroke-width="1.5"><rect x="0.5" y="3.8" width="14.5" height="14.3" stroke="#d8d8d8" stroke-width="1.1"/><path d="M2.5 10.3L7 15L17.5 1.5" stroke="#d8d8d8" stroke-width="1.2"/></svg>
<div class="t" style="left:100px;top:580.5px;font-size:12.3px;line-height:14px;color:#dcdcdc">Nose</div>
<svg class="a" style="left:48px;top:607.5px;" width="7" height="10" viewBox="0 0 7 10" fill="none" stroke="#d0d0d0" stroke-width="1.5"><path d="M0.5 0.5L6 5L0.5 9.5z" fill="#e0e0e0" stroke="none"/></svg>
<svg class="a" style="left:71px;top:600.5px;" width="20" height="20" viewBox="0 0 20 20" fill="none" stroke="#d0d0d0" stroke-width="1.5"><rect x="0.5" y="3.8" width="14.5" height="14.3" stroke="#d8d8d8" stroke-width="1.1"/><path d="M2.5 10.3L7 15L17.5 1.5" stroke="#d8d8d8" stroke-width="1.2"/></svg>
<div class="t" style="left:100px;top:605.5px;font-size:12.3px;line-height:14px;color:#dcdcdc">Mouth</div>
<svg class="a" style="left:48px;top:632.5px;" width="7" height="10" viewBox="0 0 7 10" fill="none" stroke="#d0d0d0" stroke-width="1.5"><path d="M0.5 0.5L6 5L0.5 9.5z" fill="#e0e0e0" stroke="none"/></svg>
<svg class="a" style="left:71px;top:625.5px;" width="20" height="20" viewBox="0 0 20 20" fill="none" stroke="#d0d0d0" stroke-width="1.5"><rect x="0.5" y="3.8" width="14.5" height="14.3" stroke="#d8d8d8" stroke-width="1.1"/><path d="M2.5 10.3L7 15L17.5 1.5" stroke="#d8d8d8" stroke-width="1.2"/></svg>
<div class="t" style="left:100px;top:630.5px;font-size:12.3px;line-height:14px;color:#dcdcdc">Jaw</div>
<svg class="a" style="left:48px;top:657.5px;" width="7" height="10" viewBox="0 0 7 10" fill="none" stroke="#d0d0d0" stroke-width="1.5"><path d="M0.5 0.5L6 5L0.5 9.5z" fill="#e0e0e0" stroke="none"/></svg>
<svg class="a" style="left:71px;top:650.5px;" width="20" height="20" viewBox="0 0 20 20" fill="none" stroke="#d0d0d0" stroke-width="1.5"><rect x="0.5" y="3.8" width="14.5" height="14.3" stroke="#d8d8d8" stroke-width="1.1"/><path d="M2.5 10.3L7 15L17.5 1.5" stroke="#d8d8d8" stroke-width="1.2"/></svg>
<div class="t" style="left:100px;top:655.5px;font-size:12.3px;line-height:14px;color:#dcdcdc">Chin</div>
</div>
<div class="a" style="left:1587px;top:994px;width:25px;height:25px;border:1px solid #4a4a4a"></div>
<svg class="a" style="left:1589px;top:996px;" width="21" height="21" viewBox="0 0 21 21" fill="none" stroke="#d0d0d0" stroke-width="1.5"><path d="M4 5v12 M4 11h4 M4 17h4" stroke="#8dc63f" stroke-width="1.1"/><rect x="7" y="4" width="11" height="3" stroke="#d8e8c0" stroke-width="1"/><rect x="8" y="9.5" width="10" height="3" fill="#8dc63f"/><rect x="8" y="15" width="10" height="3" fill="#8dc63f"/></svg>
<div class="a" style="left:1747px;top:224px;width:173px;height:810px;border-left:1px solid #4a4a4a;border-top:1px solid #4a4a4a;border-bottom:1px solid #4a4a4a"></div>
<div class="a" style="left:1903px;top:224px;width:17px;height:811px;background:#282828"></div>
<div class="a" style="left:1757px;top:234px;width:146px;height:25px;border:1px solid #4a4a4a;border-right:none"></div>
<div class="t" style="left:1765px;top:239.5px;font-size:12.3px;line-height:14px;color:#707070">Search</div>
<div class="a" style="left:1748px;top:260px;width:155px;height:701px;overflow:hidden">
<svg class="a" style="left:22px;top:28px" width="56" height="68" viewBox="0 0 56 68">
<defs><radialGradient id="fg0" cx="0.38" cy="0.4" r="0.65"><stop offset="0" stop-color="#efd2b8"/><stop offset="0.55" stop-color="#d6a886"/><stop offset="1" stop-color="#8e644c"/></radialGradient>
<clipPath id="fc0"><path d="M2.3 41.5 A25.7 25.7 0 0 0 53.7 41.5 L53.7 0 L2.3 0Z"/></clipPath></defs>
<circle cx="28" cy="41.5" r="25.7" fill="#1c1e22" stroke="#bcbcbc" stroke-width="1.3"/>
<g clip-path="url(#fc0)">
<path d="M20 50 L38 50 L42 68 L17 68Z" fill="#b88a6c"/>
<path d="M29 7 C20 7 13 14 13 24 C13 27 13.5 29 12.5 31 C11.5 33 11 35 12 37 C12.5 39 14 40 14.5 42 C15 45 16 48 19 50 C23 52 30 52 35 49 C39 46 41 43 42.5 40 C44 39 45.5 36 45 33 C46 30 46 26 45.5 22 C44.5 13 38 7 29 7Z" fill="url(#fg0)"/>
<ellipse cx="18" cy="31" rx="3.2" ry="1.8" fill="#6a4536" opacity="0.7"/><ellipse cx="29" cy="31" rx="3.2" ry="1.8" fill="#6a4536" opacity="0.7"/>
<path d="M14.5 28.5 Q18 27 21.5 28.5 M25.5 28.5 Q29 27 32.5 28.5" stroke="#5a3a2c" stroke-width="1.2" fill="none"/>
<path d="M14 43 Q19 42 24 43.5" stroke="#9a5e50" stroke-width="1.6" fill="none"/>
<ellipse cx="42" cy="34" rx="2.6" ry="4.5" fill="#b8896c"/>
<path d="M40 20 C44 26 44 36 41 44" stroke="#8a604a" stroke-width="3" fill="none" opacity="0.5"/>
</g>
</svg>
<div class="t" style="left:76px;top:30.0px;font-size:12.3px;line-height:14px;color:#dcdcdc">CC3+_Neutral</div>
<svg class="a" style="left:76px;top:61px;" width="80" height="14" viewBox="0 0 80 14" fill="none" stroke="#d0d0d0" stroke-width="1.5"><circle cx="7" cy="7" r="5.7" stroke="#d8d8d8" stroke-width="2"/><path d="M13 7h67" stroke="#d8d8d8" stroke-width="1.3"/></svg>
<svg class="a" style="left:22px;top:117px" width="56" height="68" viewBox="0 0 56 68">
<defs><radialGradient id="fg1" cx="0.38" cy="0.4" r="0.65"><stop offset="0" stop-color="#efd2b8"/><stop offset="0.55" stop-color="#d6a886"/><stop offset="1" stop-color="#8e644c"/></radialGradient>
<clipPath id="fc1"><path d="M2.3 41.5 A25.7 25.7 0 0 0 53.7 41.5 L53.7 0 L2.3 0Z"/></clipPath></defs>
<circle cx="28" cy="41.5" r="25.7" fill="#1c1e22" stroke="#bcbcbc" stroke-width="1.3"/>
<g clip-path="url(#fc1)">
<path d="M20 50 L38 50 L42 68 L17 68Z" fill="#b88a6c"/>
<path d="M29 7 C20 7 13 14 13 24 C13 27 13.5 29 12.5 31 C11.5 33 11 35 12 37 C12.5 39 14 40 14.5 42 C15 45 16 48 19 50 C23 52 30 52 35 49 C39 46 41 43 42.5 40 C44 39 45.5 36 45 33 C46 30 46 26 45.5 22 C44.5 13 38 7 29 7Z" fill="url(#fg1)"/>
<ellipse cx="18" cy="31" rx="3.2" ry="1.8" fill="#6a4536" opacity="0.7"/><ellipse cx="29" cy="31" rx="3.2" ry="1.8" fill="#6a4536" opacity="0.7"/>
<path d="M14.5 28.5 Q18 27 21.5 28.5 M25.5 28.5 Q29 27 32.5 28.5" stroke="#5a3a2c" stroke-width="1.2" fill="none"/>
<path d="M14 43 Q19 42 24 43.5" stroke="#9a5e50" stroke-width="1.6" fill="none"/>
<ellipse cx="42" cy="34" rx="2.6" ry="4.5" fill="#b8896c"/>
<path d="M40 20 C44 26 44 36 41 44" stroke="#8a604a" stroke-width="3" fill="none" opacity="0.5"/>
</g>
</svg>
<div class="t" style="left:76px;top:119.0px;font-size:12.3px;line-height:14px;color:#dcdcdc">CC3+_Katherine</div>
<svg class="a" style="left:76px;top:150px;" width="80" height="14" viewBox="0 0 80 14" fill="none" stroke="#d0d0d0" stroke-width="1.5"><circle cx="7" cy="7" r="5.7" stroke="#d8d8d8" stroke-width="2"/><path d="M13 7h67" stroke="#d8d8d8" stroke-width="1.3"/></svg>
<svg class="a" style="left:22px;top:206px" width="56" height="68" viewBox="0 0 56 68">
<defs><radialGradient id="fg2" cx="0.38" cy="0.4" r="0.65"><stop offset="0" stop-color="#efd2b8"/><stop offset="0.55" stop-color="#d6a886"/><stop offset="1" stop-color="#8e644c"/></radialGradient>
<clipPath id="fc2"><path d="M2.3 41.5 A25.7 25.7 0 0 0 53.7 41.5 L53.7 0 L2.3 0Z"/></clipPath></defs>
<circle cx="28" cy="41.5" r="25.7" fill="#1c1e22" stroke="#bcbcbc" stroke-width="1.3"/>
<g clip-path="url(#fc2)">
<path d="M20 50 L38 50 L42 68 L17 68Z" fill="#b88a6c"/>
<path d="M29 7 C20 7 13 14 13 24 C13 27 13.5 29 12.5 31 C11.5 33 11 35 12 37 C12.5 39 14 40 14.5 42 C15 45 16 48 19 50 C23 52 30 52 35 49 C39 46 41 43 42.5 40 C44 39 45.5 36 45 33 C46 30 46 26 45.5 22 C44.5 13 38 7 29 7Z" fill="url(#fg2)"/>
<ellipse cx="18" cy="31" rx="3.2" ry="1.8" fill="#6a4536" opacity="0.7"/><ellipse cx="29" cy="31" rx="3.2" ry="1.8" fill="#6a4536" opacity="0.7"/>
<path d="M14.5 28.5 Q18 27 21.5 28.5 M25.5 28.5 Q29 27 32.5 28.5" stroke="#5a3a2c" stroke-width="1.2" fill="none"/>
<path d="M14 43 Q19 42 24 43.5" stroke="#9a5e50" stroke-width="1.6" fill="none"/>
<ellipse cx="42" cy="34" rx="2.6" ry="4.5" fill="#b8896c"/>
<path d="M40 20 C44 26 44 36 41 44" stroke="#8a604a" stroke-width="3" fill="none" opacity="0.5"/>
</g>
</svg>
<div class="t" style="left:76px;top:208.0px;font-size:12.3px;line-height:14px;color:#dcdcdc">CC3+_Jody_H</div>
<svg class="a" style="left:76px;top:239px;" width="80" height="14" viewBox="0 0 80 14" fill="none" stroke="#d0d0d0" stroke-width="1.5"><circle cx="7" cy="7" r="5.7" stroke="#d8d8d8" stroke-width="2"/><path d="M13 7h67" stroke="#d8d8d8" stroke-width="1.3"/></svg>
<svg class="a" style="left:22px;top:295px" width="56" height="68" viewBox="0 0 56 68">
<defs><radialGradient id="fg3" cx="0.38" cy="0.4" r="0.65"><stop offset="0" stop-color="#efd2b8"/><stop offset="0.55" stop-color="#d6a886"/><stop offset="1" stop-color="#8e644c"/></radialGradient>
<clipPath id="fc3"><path d="M2.3 41.5 A25.7 25.7 0 0 0 53.7 41.5 L53.7 0 L2.3 0Z"/></clipPath></defs>
<circle cx="28" cy="41.5" r="25.7" fill="#1c1e22" stroke="#bcbcbc" stroke-width="1.3"/>
<g clip-path="url(#fc3)">
<path d="M20 50 L38 50 L42 68 L17 68Z" fill="#b88a6c"/>
<path d="M29 7 C20 7 13 14 13 24 C13 27 13.5 29 12.5 31 C11.5 33 11 35 12 37 C12.5 39 14 40 14.5 42 C15 45 16 48 19 50 C23 52 30 52 35 49 C39 46 41 43 42.5 40 C44 39 45.5 36 45 33 C46 30 46 26 45.5 22 C44.5 13 38 7 29 7Z" fill="url(#fg3)"/>
<ellipse cx="18" cy="31" rx="3.2" ry="1.8" fill="#6a4536" opacity="0.7"/><ellipse cx="29" cy="31" rx="3.2" ry="1.8" fill="#6a4536" opacity="0.7"/>
<path d="M14.5 28.5 Q18 27 21.5 28.5 M25.5 28.5 Q29 27 32.5 28.5" stroke="#5a3a2c" stroke-width="1.2" fill="none"/>
<path d="M14 43 Q19 42 24 43.5" stroke="#9a5e50" stroke-width="1.6" fill="none"/>
<ellipse cx="42" cy="34" rx="2.6" ry="4.5" fill="#b8896c"/>
<path d="M40 20 C44 26 44 36 41 44" stroke="#8a604a" stroke-width="3" fill="none" opacity="0.5"/>
</g>
</svg>
<div class="t" style="left:76px;top:297.0px;font-size:12.3px;line-height:14px;color:#dcdcdc">CC3_Base_Female</div>
<svg class="a" style="left:76px;top:328px;" width="80" height="14" viewBox="0 0 80 14" fill="none" stroke="#d0d0d0" stroke-width="1.5"><circle cx="7" cy="7" r="5.7" stroke="#d8d8d8" stroke-width="2"/><path d="M13 7h67" stroke="#d8d8d8" stroke-width="1.3"/></svg>
<svg class="a" style="left:22px;top:384px" width="56" height="68" viewBox="0 0 56 68">
<defs><radialGradient id="fg4" cx="0.38" cy="0.4" r="0.65"><stop offset="0" stop-color="#efd2b8"/><stop offset="0.55" stop-color="#d6a886"/><stop offset="1" stop-color="#8e644c"/></radialGradient>
<clipPath id="fc4"><path d="M2.3 41.5 A25.7 25.7 0 0 0 53.7 41.5 L53.7 0 L2.3 0Z"/></clipPath></defs>
<circle cx="28" cy="41.5" r="25.7" fill="#1c1e22" stroke="#bcbcbc" stroke-width="1.3"/>
<g clip-path="url(#fc4)">
<path d="M20 50 L38 50 L42 68 L17 68Z" fill="#b88a6c"/>
<path d="M29 7 C20 7 13 14 13 24 C13 27 13.5 29 12.5 31 C11.5 33 11 35 12 37 C12.5 39 14 40 14.5 42 C15 45 16 48 19 50 C23 52 30 52 35 49 C39 46 41 43 42.5 40 C44 39 45.5 36 45 33 C46 30 46 26 45.5 22 C44.5 13 38 7 29 7Z" fill="url(#fg4)"/>
<ellipse cx="18" cy="31" rx="3.2" ry="1.8" fill="#6a4536" opacity="0.7"/><ellipse cx="29" cy="31" rx="3.2" ry="1.8" fill="#6a4536" opacity="0.7"/>
<path d="M14.5 28.5 Q18 27 21.5 28.5 M25.5 28.5 Q29 27 32.5 28.5" stroke="#5a3a2c" stroke-width="1.2" fill="none"/>
<path d="M14 43 Q19 42 24 43.5" stroke="#9a5e50" stroke-width="1.6" fill="none"/>
<ellipse cx="42" cy="34" rx="2.6" ry="4.5" fill="#b8896c"/>
<path d="M40 20 C44 26 44 36 41 44" stroke="#8a604a" stroke-width="3" fill="none" opacity="0.5"/>
</g>
</svg>
<div class="t" style="left:76px;top:386.0px;font-size:12.3px;line-height:14px;color:#dcdcdc">CC1_Base_Female</div>
<svg class="a" style="left:76px;top:417px;" width="80" height="14" viewBox="0 0 80 14" fill="none" stroke="#d0d0d0" stroke-width="1.5"><circle cx="7" cy="7" r="5.7" stroke="#d8d8d8" stroke-width="2"/><path d="M13 7h67" stroke="#d8d8d8" stroke-width="1.3"/></svg>
<svg class="a" style="left:22px;top:473px" width="56" height="68" viewBox="0 0 56 68">
<defs><radialGradient id="fg5" cx="0.38" cy="0.4" r="0.65"><stop offset="0" stop-color="#efd2b8"/><stop offset="0.55" stop-color="#d6a886"/><stop offset="1" stop-color="#8e644c"/></radialGradient>
<clipPath id="fc5"><path d="M2.3 41.5 A25.7 25.7 0 0 0 53.7 41.5 L53.7 0 L2.3 0Z"/></clipPath></defs>
<circle cx="28" cy="41.5" r="25.7" fill="#1c1e22" stroke="#bcbcbc" stroke-width="1.3"/>
<g clip-path="url(#fc5)">
<path d="M20 50 L38 50 L42 68 L17 68Z" fill="#b88a6c"/>
<path d="M29 7 C20 7 13 14 13 24 C13 27 13.5 29 12.5 31 C11.5 33 11 35 12 37 C12.5 39 14 40 14.5 42 C15 45 16 48 19 50 C23 52 30 52 35 49 C39 46 41 43 42.5 40 C44 39 45.5 36 45 33 C46 30 46 26 45.5 22 C44.5 13 38 7 29 7Z" fill="url(#fg5)"/>
<ellipse cx="18" cy="31" rx="3.2" ry="1.8" fill="#6a4536" opacity="0.7"/><ellipse cx="29" cy="31" rx="3.2" ry="1.8" fill="#6a4536" opacity="0.7"/>
<path d="M14.5 28.5 Q18 27 21.5 28.5 M25.5 28.5 Q29 27 32.5 28.5" stroke="#5a3a2c" stroke-width="1.2" fill="none"/>
<path d="M14 43 Q19 42 24 43.5" stroke="#9a5e50" stroke-width="1.6" fill="none"/>
<ellipse cx="42" cy="34" rx="2.6" ry="4.5" fill="#b8896c"/>
<path d="M40 20 C44 26 44 36 41 44" stroke="#8a604a" stroke-width="3" fill="none" opacity="0.5"/>
</g>
</svg>
<div class="t" style="left:76px;top:475.0px;font-size:12.3px;line-height:14px;color:#dcdcdc">CC3+_Neutral</div>
<svg class="a" style="left:76px;top:506px;" width="80" height="14" viewBox="0 0 80 14" fill="none" stroke="#d0d0d0" stroke-width="1.5"><circle cx="7" cy="7" r="5.7" stroke="#d8d8d8" stroke-width="2"/><path d="M13 7h67" stroke="#d8d8d8" stroke-width="1.3"/></svg>
<svg class="a" style="left:22px;top:562px" width="56" height="68" viewBox="0 0 56 68">
<defs><radialGradient id="fg6" cx="0.38" cy="0.4" r="0.65"><stop offset="0" stop-color="#efd2b8"/><stop offset="0.55" stop-color="#d6a886"/><stop offset="1" stop-color="#8e644c"/></radialGradient>
<clipPath id="fc6"><path d="M2.3 41.5 A25.7 25.7 0 0 0 53.7 41.5 L53.7 0 L2.3 0Z"/></clipPath></defs>
<circle cx="28" cy="41.5" r="25.7" fill="#1c1e22" stroke="#bcbcbc" stroke-width="1.3"/>
<g clip-path="url(#fc6)">
<path d="M20 50 L38 50 L42 68 L17 68Z" fill="#b88a6c"/>
<path d="M29 7 C20 7 13 14 13 24 C13 27 13.5 29 12.5 31 C11.5 33 11 35 12 37 C12.5 39 14 40 14.5 42 C15 45 16 48 19 50 C23 52 30 52 35 49 C39 46 41 43 42.5 40 C44 39 45.5 36 45 33 C46 30 46 26 45.5 22 C44.5 13 38 7 29 7Z" fill="url(#fg6)"/>
<ellipse cx="18" cy="31" rx="3.2" ry="1.8" fill="#6a4536" opacity="0.7"/><ellipse cx="29" cy="31" rx="3.2" ry="1.8" fill="#6a4536" opacity="0.7"/>
<path d="M14.5 28.5 Q18 27 21.5 28.5 M25.5 28.5 Q29 27 32.5 28.5" stroke="#5a3a2c" stroke-width="1.2" fill="none"/>
<path d="M14 43 Q19 42 24 43.5" stroke="#9a5e50" stroke-width="1.6" fill="none"/>
<ellipse cx="42" cy="34" rx="2.6" ry="4.5" fill="#b8896c"/>
<path d="M40 20 C44 26 44 36 41 44" stroke="#8a604a" stroke-width="3" fill="none" opacity="0.5"/>
</g>
</svg>
<div class="t" style="left:76px;top:564.0px;font-size:12.3px;line-height:14px;color:#dcdcdc">CC3+_Caleb_</div>
<svg class="a" style="left:76px;top:595px;" width="80" height="14" viewBox="0 0 80 14" fill="none" stroke="#d0d0d0" stroke-width="1.5"><circle cx="7" cy="7" r="5.7" stroke="#d8d8d8" stroke-width="2"/><path d="M13 7h67" stroke="#d8d8d8" stroke-width="1.3"/></svg>
<svg class="a" style="left:22px;top:651px" width="56" height="68" viewBox="0 0 56 68">
<defs><radialGradient id="fg7" cx="0.38" cy="0.4" r="0.65"><stop offset="0" stop-color="#efd2b8"/><stop offset="0.55" stop-color="#d6a886"/><stop offset="1" stop-color="#8e644c"/></radialGradient>
<clipPath id="fc7"><path d="M2.3 41.5 A25.7 25.7 0 0 0 53.7 41.5 L53.7 0 L2.3 0Z"/></clipPath></defs>
<circle cx="28" cy="41.5" r="25.7" fill="#1c1e22" stroke="#bcbcbc" stroke-width="1.3"/>
<g clip-path="url(#fc7)">
<path d="M20 50 L38 50 L42 68 L17 68Z" fill="#b88a6c"/>
<path d="M29 7 C20 7 13 14 13 24 C13 27 13.5 29 12.5 31 C11.5 33 11 35 12 37 C12.5 39 14 40 14.5 42 C15 45 16 48 19 50 C23 52 30 52 35 49 C39 46 41 43 42.5 40 C44 39 45.5 36 45 33 C46 30 46 26 45.5 22 C44.5 13 38 7 29 7Z" fill="url(#fg7)"/>
<ellipse cx="18" cy="31" rx="3.2" ry="1.8" fill="#6a4536" opacity="0.7"/><ellipse cx="29" cy="31" rx="3.2" ry="1.8" fill="#6a4536" opacity="0.7"/>
<path d="M14.5 28.5 Q18 27 21.5 28.5 M25.5 28.5 Q29 27 32.5 28.5" stroke="#5a3a2c" stroke-width="1.2" fill="none"/>
<path d="M14 43 Q19 42 24 43.5" stroke="#9a5e50" stroke-width="1.6" fill="none"/>
<ellipse cx="42" cy="34" rx="2.6" ry="4.5" fill="#b8896c"/>
<path d="M40 20 C44 26 44 36 41 44" stroke="#8a604a" stroke-width="3" fill="none" opacity="0.5"/>
</g>
</svg>
<div class="t" style="left:76px;top:653.0px;font-size:12.3px;line-height:14px;color:#dcdcdc">CC3+_Kevin_H</div>
<svg class="a" style="left:76px;top:684px;" width="80" height="14" viewBox="0 0 80 14" fill="none" stroke="#d0d0d0" stroke-width="1.5"><circle cx="7" cy="7" r="5.7" stroke="#d8d8d8" stroke-width="2"/><path d="M13 7h67" stroke="#d8d8d8" stroke-width="1.3"/></svg>
</div>
<div class="a" style="left:1753px;top:966px;width:150px;height:7px;background:#555;border-radius:3px"></div>
<div class="a" style="left:1763px;top:992px;width:102px;height:28px;border:1px solid #4a4a4a"></div>
<div class="t" style="left:1614.0px;top:999.5px;width:400px;text-align:center;font-size:12.3px;line-height:14px;color:#dcdcdc">Bake</div>
<div class="a" style="left:1875px;top:992px;width:28px;height:28px;border:1px solid #4a4a4a;border-right:none"></div>
<div class="a" style="left:1918px;top:169px;width:2px;height:880px;background:#282828"></div>
<div class="a" style="left:0px;top:1049px;width:1920px;height:2px;background:#f0f0f0"></div>
</body></html>
